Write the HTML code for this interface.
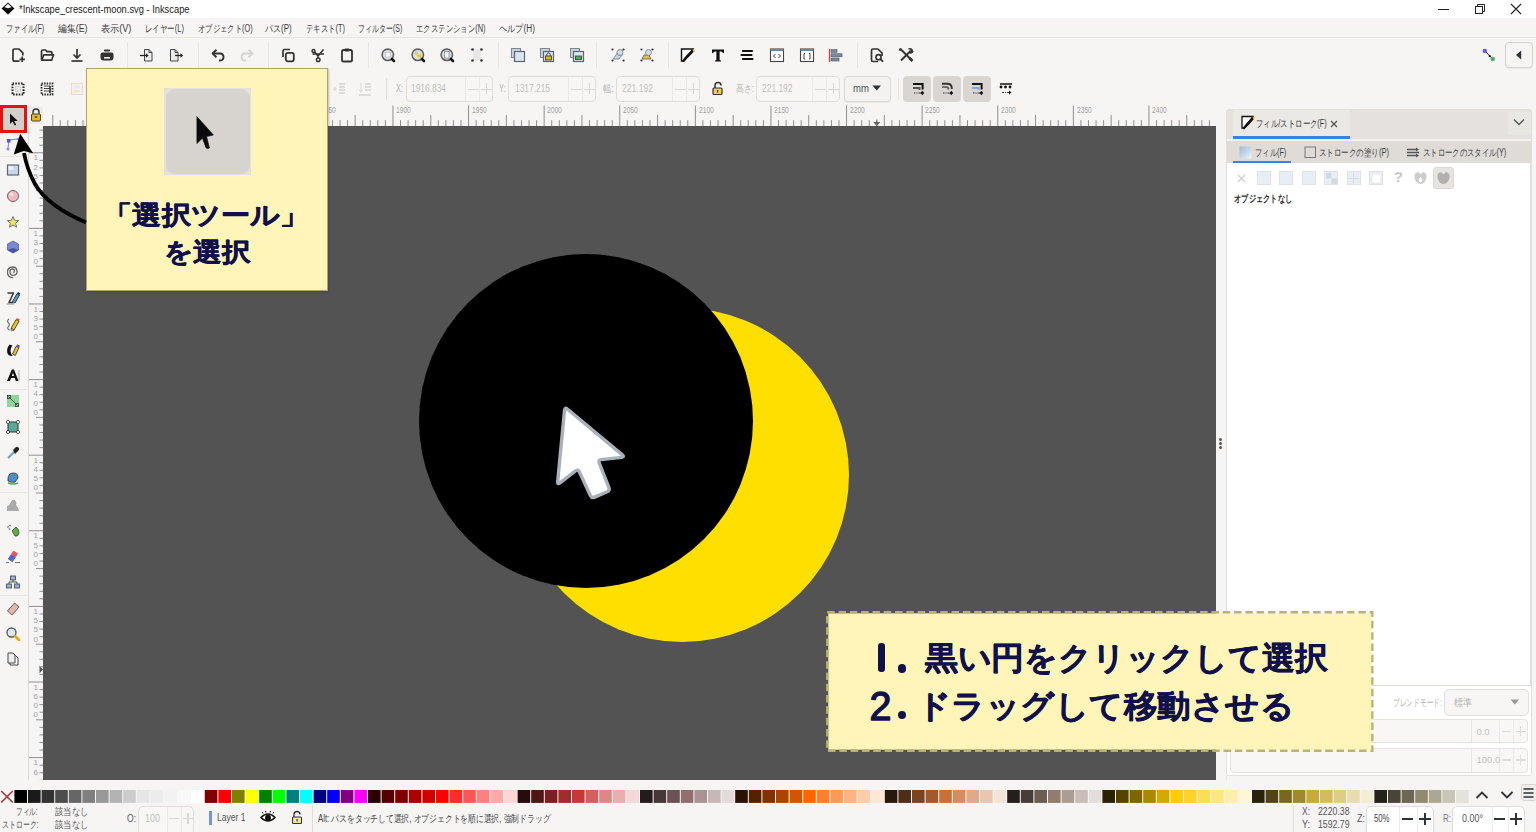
<!DOCTYPE html><html><head><meta charset="utf-8"><style>*{margin:0;padding:0;box-sizing:border-box}html,body{width:1536px;height:832px;overflow:hidden;background:#f6f5f4;font-family:"Liberation Sans",sans-serif}.a{position:absolute}.t{position:absolute;white-space:nowrap}svg.a{overflow:visible}</style></head><body>
<div class="a" style="left:0px;top:0px;width:1536px;height:18px;background:#fff"></div>
<svg class="a" style="left:1px;top:2px;" width="14" height="13" viewBox="0 0 14 13"><path d="M7 0.5 L13.5 6.5 L7 12.5 L0.5 6.5Z" fill="#111"/><path d="M7 1.8 L10.5 5.2 L7 6.2 L3.5 5.2Z" fill="#fff"/><path d="M4 9 L10 9 L7 12Z" fill="#000"/></svg>
<div class="t" style="left:19.1px;top:3.60px;height:11px;line-height:11px;font-size:11px;color:#1a1a1a;font-weight:normal;transform:scaleX(0.8476);transform-origin:0 50%;">*Inkscape_crescent-moon.svg - Inkscape</div>
<div class="a" style="left:1438px;top:8.5px;width:11px;height:1px;background:#222"></div>
<svg class="a" style="left:1473px;top:2px;" width="14" height="14" viewBox="0 0 14 14"><rect x="2.5" y="4.5" width="7" height="7" fill="none" stroke="#222" stroke-width="1"/><path d="M4.5 4.5 V2.5 H11.5 V9.5 H9.5" fill="none" stroke="#222" stroke-width="1"/></svg>
<svg class="a" style="left:1508px;top:1px;" width="16" height="16" viewBox="0 0 16 16"><path d="M3 3 L13 13 M13 3 L3 13" stroke="#222" stroke-width="1.1"/></svg>
<div class="a" style="left:0px;top:37px;width:1536px;height:1px;background:#e8e6e3"></div>
<div class="t" style="left:6.4px;top:23.60px;height:10px;line-height:10px;font-size:10px;color:#3c3c3c;font-weight:normal;transform:scaleX(0.7256);transform-origin:0 50%;">ファイル(F)</div>
<div class="t" style="left:58px;top:23.60px;height:10px;line-height:10px;font-size:10px;color:#3c3c3c;font-weight:normal;transform:scaleX(0.8847);transform-origin:0 50%;">編集(E)</div>
<div class="t" style="left:101.2px;top:23.60px;height:10px;line-height:10px;font-size:10px;color:#3c3c3c;font-weight:normal;transform:scaleX(0.9117);transform-origin:0 50%;">表示(V)</div>
<div class="t" style="left:145px;top:23.60px;height:10px;line-height:10px;font-size:10px;color:#3c3c3c;font-weight:normal;transform:scaleX(0.7466);transform-origin:0 50%;">レイヤー(L)</div>
<div class="t" style="left:197.8px;top:23.60px;height:10px;line-height:10px;font-size:10px;color:#3c3c3c;font-weight:normal;transform:scaleX(0.7347);transform-origin:0 50%;">オブジェクト(O)</div>
<div class="t" style="left:265.2px;top:23.60px;height:10px;line-height:10px;font-size:10px;color:#3c3c3c;font-weight:normal;transform:scaleX(0.8007);transform-origin:0 50%;">パス(P)</div>
<div class="t" style="left:305.5px;top:23.60px;height:10px;line-height:10px;font-size:10px;color:#3c3c3c;font-weight:normal;transform:scaleX(0.7370);transform-origin:0 50%;">テキスト(T)</div>
<div class="t" style="left:357.9px;top:23.60px;height:10px;line-height:10px;font-size:10px;color:#3c3c3c;font-weight:normal;transform:scaleX(0.6994);transform-origin:0 50%;">フィルター(S)</div>
<div class="t" style="left:415.5px;top:23.60px;height:10px;line-height:10px;font-size:10px;color:#3c3c3c;font-weight:normal;transform:scaleX(0.7402);transform-origin:0 50%;">エクステンション(N)</div>
<div class="t" style="left:498.8px;top:23.60px;height:10px;line-height:10px;font-size:10px;color:#3c3c3c;font-weight:normal;transform:scaleX(0.8179);transform-origin:0 50%;">ヘルプ(H)</div>
<div class="a" style="left:127px;top:42px;width:1px;height:26px;background:#e9e7e4"></div>
<div class="a" style="left:197.5px;top:42px;width:1px;height:26px;background:#e9e7e4"></div>
<div class="a" style="left:267.6px;top:42px;width:1px;height:26px;background:#e9e7e4"></div>
<div class="a" style="left:367.6px;top:42px;width:1px;height:26px;background:#e9e7e4"></div>
<div class="a" style="left:497.5px;top:42px;width:1px;height:26px;background:#e9e7e4"></div>
<div class="a" style="left:596px;top:42px;width:1px;height:26px;background:#e9e7e4"></div>
<div class="a" style="left:667.5px;top:42px;width:1px;height:26px;background:#e9e7e4"></div>
<div class="a" style="left:857px;top:42px;width:1px;height:26px;background:#e9e7e4"></div>
<svg class="a" style="left:9.8px;top:47.0px;" width="16" height="16" viewBox="0 0 16 16"><path d="M9.5 14.2 H4.6 Q3 14.2 3 12.6 V3.6 Q3 2 4.6 2 H9 L12.8 5.8 V8.5" fill="none" stroke="#333" stroke-width="1.7" stroke-linejoin="round"/><path d="M12.2 9.6 V15 M9.5 12.3 H14.9" stroke="#333" stroke-width="1.7"/></svg>
<svg class="a" style="left:39.2px;top:47.0px;" width="16" height="16" viewBox="0 0 16 16"><path d="M2.5 12.5 V4.4 Q2.5 3 4 3 H6.5 L8 4.6 H11.5 Q13 4.6 13 6 V7" fill="none" stroke="#333" stroke-width="1.7" stroke-linejoin="round"/><path d="M2.8 13.2 L4.8 7.8 H14.6 L12.6 13.2 Z" fill="none" stroke="#333" stroke-width="1.7" stroke-linejoin="round"/></svg>
<svg class="a" style="left:68.9px;top:47.0px;" width="16" height="16" viewBox="0 0 16 16"><path d="M8 2 V11 M4.5 7.5 L8 11 L11.5 7.5" fill="none" stroke="#333" stroke-width="1.7"/><path d="M2.5 14 H13.5" stroke="#333" stroke-width="1.7"/></svg>
<svg class="a" style="left:98.5px;top:47.0px;" width="16" height="16" viewBox="0 0 16 16"><rect x="5" y="2.5" width="6" height="2" rx="0.8" fill="#333"/><path d="M1.5 7.5 Q1.5 5.5 3.5 5.5 H12.5 Q14.5 5.5 14.5 7.5 V10.5 Q14.5 13.5 11.5 13.5 H4.5 Q1.5 13.5 1.5 10.5Z" fill="#333"/><rect x="5" y="10" width="6" height="1.6" fill="#f6f5f4"/></svg>
<svg class="a" style="left:139.2px;top:47.0px;" width="16" height="16" viewBox="0 0 16 16"><path d="M5.5 2.5 H10 L13 5.5 V14 H5.5 Z" fill="#ececec" stroke="#444" stroke-width="1"/><path d="M10 2.5 V5.5 H13" fill="none" stroke="#444" stroke-width="1"/><path d="M1 8.5 H8.5" stroke="#222" stroke-width="1.3"/><path d="M7 6.3 L9.6 8.5 L7 10.7Z" fill="#222"/></svg>
<svg class="a" style="left:168.2px;top:47.0px;" width="16" height="16" viewBox="0 0 16 16"><path d="M2.5 2.5 H7 L10 5.5 V14 H2.5 Z" fill="#ececec" stroke="#444" stroke-width="1"/><path d="M7 2.5 V5.5 H10" fill="none" stroke="#444" stroke-width="1"/><path d="M7 8.5 H13.5" stroke="#222" stroke-width="1.3"/><path d="M12.5 6.3 L15.2 8.5 L12.5 10.7Z" fill="#222"/></svg>
<svg class="a" style="left:209.6px;top:47.0px;" width="16" height="16" viewBox="0 0 16 16"><path d="M3 6.5 H10 Q13.5 6.5 13.5 10 Q13.5 13.5 10 13.5 H9" fill="none" stroke="#333" stroke-width="1.9"/><path d="M6.5 2.8 L2.6 6.5 L6.5 10.2" fill="none" stroke="#333" stroke-width="1.9" stroke-linejoin="round"/></svg>
<svg class="a" style="left:238.6px;top:47.0px;" width="16" height="16" viewBox="0 0 16 16"><path d="M13 6.5 H6 Q2.5 6.5 2.5 10 Q2.5 13.5 6 13.5 H7" fill="none" stroke="#d5d3d0" stroke-width="1.9"/><path d="M9.5 2.8 L13.4 6.5 L9.5 10.2" fill="none" stroke="#d5d3d0" stroke-width="1.9" stroke-linejoin="round"/></svg>
<svg class="a" style="left:280.0px;top:47.0px;" width="16" height="16" viewBox="0 0 16 16"><path d="M3 10 V4 Q3 2.5 4.5 2.5 H10" fill="none" stroke="#333" stroke-width="1.7"/><rect x="5.8" y="5.8" width="8" height="8.5" rx="2" fill="none" stroke="#333" stroke-width="1.8"/></svg>
<svg class="a" style="left:309.6px;top:47.0px;" width="16" height="16" viewBox="0 0 16 16"><circle cx="8.2" cy="12.8" r="1.8" fill="none" stroke="#333" stroke-width="1.5"/><circle cx="3.5" cy="4" r="1.5" fill="none" stroke="#333" stroke-width="1.4"/><path d="M4.8 5 L8 9 L13.5 2.5 M8 9 V11 M2.5 7 H14" fill="none" stroke="#333" stroke-width="1.5"/></svg>
<svg class="a" style="left:339.3px;top:47.0px;" width="16" height="16" viewBox="0 0 16 16"><rect x="3" y="3" width="10" height="11.5" rx="1.6" fill="none" stroke="#333" stroke-width="1.8"/><rect x="5.5" y="1.5" width="5" height="3" rx="0.8" fill="#333"/></svg>
<svg class="a" style="left:379.8px;top:47.0px;" width="16" height="16" viewBox="0 0 16 16"><circle cx="7.8" cy="7.8" r="5.7" fill="#dde3ea" stroke="#5e5e5e" stroke-width="1.6"/><rect x="5.3" y="5.5" width="5" height="4.5" fill="#fff" stroke="#bbb" stroke-width="0.8"/><path d="M12 12 L14 14" stroke="#111" stroke-width="2.6" stroke-linecap="round"/></svg>
<svg class="a" style="left:409.5px;top:47.0px;" width="16" height="16" viewBox="0 0 16 16"><circle cx="7.8" cy="7.8" r="5.7" fill="#dde3ea" stroke="#5e5e5e" stroke-width="1.6"/><rect x="4.5" y="4.5" width="3.5" height="3.5" fill="#d8d070" /><rect x="7.3" y="7.3" width="4" height="3.5" fill="#e8cc30"/><path d="M12 12 L14 14" stroke="#111" stroke-width="2.6" stroke-linecap="round"/></svg>
<svg class="a" style="left:438.5px;top:47.0px;" width="16" height="16" viewBox="0 0 16 16"><circle cx="7.8" cy="7.8" r="5.7" fill="#dde3ea" stroke="#5e5e5e" stroke-width="1.6"/><rect x="5.6" y="4.6" width="4.5" height="6.5" fill="#fff" stroke="#888" stroke-width="0.9"/><path d="M12 12 L14 14" stroke="#111" stroke-width="2.6" stroke-linecap="round"/></svg>
<svg class="a" style="left:468.9px;top:47.0px;" width="16" height="16" viewBox="0 0 16 16"><rect x="4" y="2.5" width="8" height="11" fill="#e6e6e6"/><circle cx="3.5" cy="2.5" r="1.3" fill="#333"/><circle cx="12.5" cy="2.5" r="1.3" fill="#333"/><circle cx="3.5" cy="13.5" r="1.3" fill="#333"/><circle cx="12.5" cy="13.5" r="1.3" fill="#333"/></svg>
<svg class="a" style="left:509.5px;top:47.0px;" width="16" height="16" viewBox="0 0 16 16"><rect x="1.5" y="1.5" width="9" height="9" fill="#c9d3de" stroke="#7a8590" stroke-width="1"/><rect x="4.5" y="4.5" width="10" height="10" fill="#d9e5f2" stroke="#5a6570" stroke-width="1.2"/></svg>
<svg class="a" style="left:539.2px;top:47.0px;" width="16" height="16" viewBox="0 0 16 16"><rect x="1.5" y="1.5" width="9" height="9" fill="#c9d3de" stroke="#7a8590" stroke-width="1"/><rect x="4.5" y="4.5" width="10" height="10" fill="#d9e5f2" stroke="#5a6570" stroke-width="1.2"/><rect x="6.5" y="9" width="6" height="4" fill="#e6b800" stroke="#333" stroke-width="0.8"/><path d="M7.8 9 V7.6 A1.7 1.7 0 0 1 11.2 7.6 V9" fill="none" stroke="#333" stroke-width="0.9"/></svg>
<svg class="a" style="left:568.5px;top:47.0px;" width="16" height="16" viewBox="0 0 16 16"><rect x="1.5" y="1.5" width="9" height="9" fill="#c9d3de" stroke="#7a8590" stroke-width="1"/><rect x="4.5" y="4.5" width="10" height="10" fill="#d9e5f2" stroke="#5a6570" stroke-width="1.2"/><rect x="6.5" y="9" width="6" height="3.5" fill="#4caf50" stroke="#333" stroke-width="0.8"/></svg>
<svg class="a" style="left:609.5px;top:47.0px;" width="16" height="16" viewBox="0 0 16 16"><path d="M3 12 L6 8 Q7 5 10 4 L13 7 L9 12Z" fill="#c5d3e0" stroke="#778" stroke-width="0.8"/><circle cx="10" cy="5.5" r="3" fill="#d0dce8" stroke="#778" stroke-width="0.8"/><circle cx="2.5" cy="2.5" r="1.1" fill="#333"/><circle cx="13.5" cy="2.5" r="1.1" fill="#333"/><circle cx="2.5" cy="13.5" r="1.1" fill="#333"/><circle cx="13.5" cy="13.5" r="1.1" fill="#333"/></svg>
<svg class="a" style="left:639.2px;top:47.0px;" width="16" height="16" viewBox="0 0 16 16"><path d="M3 12 L5 8 H10 L12 12Z" fill="#e6c530" stroke="#555" stroke-width="0.8"/><circle cx="9.5" cy="5.5" r="3" fill="#d0dce8" stroke="#778" stroke-width="0.8"/><circle cx="2.5" cy="2.5" r="1.1" fill="#333"/><circle cx="13.5" cy="2.5" r="1.1" fill="#333"/><circle cx="2.5" cy="13.5" r="1.1" fill="#333"/><circle cx="13.5" cy="13.5" r="1.1" fill="#333"/></svg>
<svg class="a" style="left:679.8px;top:47.0px;" width="16" height="16" viewBox="0 0 16 16"><path d="M1.5 2 H13 L4 14 H1.5Z" fill="#fff" stroke="#111" stroke-width="1.4"/><path d="M2 14 Q5 9 12 3 L14 4.5 Q8 11 3.5 15Z" fill="#111"/><path d="M12.5 2 L15 3.5 L13.5 5.5Z" fill="#f0b400"/></svg>
<svg class="a" style="left:709.5px;top:47.0px;" width="16" height="16" viewBox="0 0 16 16"><path d="M2 2.5 H14 V6 H12.8 Q12.5 4.5 11 4.5 H9.6 V12.5 Q9.6 13.4 11 13.5 V14.5 H5 V13.5 Q6.4 13.4 6.4 12.5 V4.5 H5 Q3.5 4.5 3.2 6 H2Z" fill="#111"/></svg>
<svg class="a" style="left:739.2px;top:47.0px;" width="16" height="16" viewBox="0 0 16 16"><path d="M4 4 H13 M2.5 8 H12.5 M4 12 H13.5" stroke="#111" stroke-width="2.2" stroke-linecap="round"/></svg>
<svg class="a" style="left:768.5px;top:47.0px;" width="16" height="16" viewBox="0 0 16 16"><rect x="1.5" y="2" width="13" height="12.5" fill="#fff" stroke="#444" stroke-width="1.1"/><rect x="1.5" y="2" width="13" height="2" fill="#6a86a6"/><path d="M6.5 7 L4.5 9 L6.5 11 M9.5 7 L11.5 9 L9.5 11" fill="none" stroke="#444" stroke-width="1"/></svg>
<svg class="a" style="left:798.5px;top:47.0px;" width="16" height="16" viewBox="0 0 16 16"><rect x="1.5" y="2" width="13" height="12.5" fill="#fff" stroke="#444" stroke-width="1.1"/><rect x="1.5" y="2" width="13" height="2" fill="#6a86a6"/><path d="M6 6.5 H5 V12 H6 M10 6.5 H11 V12 H10" fill="none" stroke="#444" stroke-width="1"/></svg>
<svg class="a" style="left:827.8px;top:47.0px;" width="16" height="16" viewBox="0 0 16 16"><path d="M1.5 2 V15" stroke="#e33" stroke-width="1.2"/><rect x="3" y="2.5" width="6" height="3" fill="#6f8db0" stroke="#555" stroke-width="0.6"/><rect x="3" y="6.8" width="11" height="3" fill="#6f8db0" stroke="#555" stroke-width="0.6"/><rect x="3" y="11" width="8" height="3" fill="#6f8db0" stroke="#555" stroke-width="0.6"/></svg>
<svg class="a" style="left:868.5px;top:47.0px;" width="16" height="16" viewBox="0 0 16 16"><path d="M9 14.5 H4 Q2.5 14.5 2.5 13 V3.5 Q2.5 2 4 2 H9 L13 6 V9" fill="none" stroke="#333" stroke-width="1.7" stroke-linejoin="round"/><circle cx="9.5" cy="10.2" r="2.6" fill="none" stroke="#333" stroke-width="1.6"/><path d="M11.3 12 L14 14.7" stroke="#333" stroke-width="1.8"/></svg>
<svg class="a" style="left:898.0px;top:47.0px;" width="16" height="16" viewBox="0 0 16 16"><path d="M3 13.5 L12.5 4" stroke="#333" stroke-width="2"/><path d="M3.5 3 L13 12.5" stroke="#333" stroke-width="2"/><path d="M10.5 2 Q13.5 1 14.5 4 L12.5 4 L12.5 6 Q14.5 6 14.5 4" fill="none" stroke="#333" stroke-width="1.6"/><circle cx="2.5" cy="2.5" r="1.5" fill="#333"/><path d="M11.5 11 L14.5 14" stroke="#333" stroke-width="2.6"/></svg>
<svg class="a" style="left:1480px;top:46px;" width="16" height="16" viewBox="0 0 16 16"><path d="M4.8 4.8 L12.7 13" stroke="#333" stroke-width="1"/><circle cx="4.8" cy="4.9" r="2.2" fill="#5b5bf5"/><circle cx="12.7" cy="13" r="2.3" fill="#4caf6a"/><circle cx="9.7" cy="10" r="1.1" fill="#000"/></svg>
<div class="a" style="left:1504.6px;top:41.7px;width:28px;height:26.7px;background:#f6f5f4;border:1px solid #d6d3cf;border-radius:4px;box-shadow:0 1px 1px rgba(0,0,0,0.06)"></div>
<svg class="a" style="left:1514px;top:49px;" width="10" height="12" viewBox="0 0 10 12"><path d="M7.2 1.5 V10.5 L2 6Z" fill="#2e3436"/></svg>
<svg class="a" style="left:9.5px;top:80.7px;" width="16" height="16" viewBox="0 0 16 16"><rect x="2.5" y="2.5" width="11" height="11" fill="none" stroke="#222" stroke-width="2" stroke-dasharray="1.6 1.2"/><rect x="5.5" y="5.5" width="5" height="5" fill="#e9e9e9" stroke="#bbb" stroke-width="0.6"/></svg>
<svg class="a" style="left:39px;top:80.5px;" width="16" height="16" viewBox="0 0 16 16"><rect x="2.5" y="2.5" width="11" height="11" fill="none" stroke="#222" stroke-width="1.8" stroke-dasharray="1.4 1.2"/><path d="M5 5 H11 M5 7.5 H11 M5 10 H11" stroke="#444" stroke-width="1.2"/><path d="M11 5 V12" stroke="#222" stroke-width="1.5"/></svg>
<svg class="a" style="left:69px;top:80.5px;" width="16" height="16" viewBox="0 0 16 16"><rect x="2.5" y="2.5" width="11" height="11" fill="#f7f1ea" stroke="#f0d8d8" stroke-width="1"/><rect x="4.5" y="4.5" width="7" height="3" fill="#e4ecf4"/><path d="M5 10 L11 10" stroke="#efeac0" stroke-width="2"/></svg>
<svg class="a" style="left:331px;top:80.5px;" width="16" height="16" viewBox="0 0 16 16"><path d="M2 8 H6 M4 6 V10" stroke="#d8d6d3" stroke-width="1"/><path d="M8 3 H14 M8 6 H14 M8 9 H14 M8 12 H14" stroke="#d6d4d1" stroke-width="1.6"/></svg>
<svg class="a" style="left:357px;top:80.5px;" width="16" height="16" viewBox="0 0 16 16"><path d="M4 2 V11 M2 9 L4 11 L6 9" fill="none" stroke="#d8d6d3" stroke-width="1"/><path d="M8 3 H14 M8 6 H14 M8 9 H14 M2 14 H14" stroke="#d6d4d1" stroke-width="1.6"/></svg>
<div class="a" style="left:386px;top:78px;width:1px;height:22px;background:#e4e1dd"></div>
<div class="t" style="left:395.5px;top:83.80px;height:10px;line-height:10px;font-size:10px;color:#b8b6b3;font-weight:normal;transform:scaleX(0.7405);transform-origin:0 50%;">X:</div>
<div class="a" style="left:405.5px;top:75.5px;width:87.0px;height:26.5px;background:#f7f6f5;border:1px solid #e0ddd9;border-radius:4px"></div>
<div class="a" style="left:464.5px;top:76.5px;width:1px;height:24.5px;background:#ebe9e6"></div>
<div class="a" style="left:479.0px;top:76.5px;width:1px;height:24.5px;background:#ebe9e6"></div>
<div class="a" style="left:467.5px;top:88.5px;width:11px;height:1.2px;background:#dad8d5"></div>
<div class="a" style="left:481.0px;top:88.5px;width:11px;height:1.2px;background:#dad8d5"></div>
<div class="a" style="left:486.0px;top:83px;width:1.2px;height:11px;background:#dad8d5"></div>
<div class="t" style="left:411.3px;top:83.80px;height:10px;line-height:10px;font-size:10px;color:#c2c0bd;font-weight:normal;transform:scaleX(0.8390);transform-origin:0 50%;">1916.834</div>
<div class="t" style="left:499px;top:83.80px;height:10px;line-height:10px;font-size:10px;color:#b8b6b3;font-weight:normal;transform:scaleX(0.7298);transform-origin:0 50%;">Y:</div>
<div class="a" style="left:508px;top:75.5px;width:87.5px;height:26.5px;background:#f7f6f5;border:1px solid #e0ddd9;border-radius:4px"></div>
<div class="a" style="left:567.5px;top:76.5px;width:1px;height:24.5px;background:#ebe9e6"></div>
<div class="a" style="left:582.0px;top:76.5px;width:1px;height:24.5px;background:#ebe9e6"></div>
<div class="a" style="left:570.5px;top:88.5px;width:11px;height:1.2px;background:#dad8d5"></div>
<div class="a" style="left:584.0px;top:88.5px;width:11px;height:1.2px;background:#dad8d5"></div>
<div class="a" style="left:589.0px;top:83px;width:1.2px;height:11px;background:#dad8d5"></div>
<div class="t" style="left:514.5px;top:83.80px;height:10px;line-height:10px;font-size:10px;color:#c2c0bd;font-weight:normal;transform:scaleX(0.8390);transform-origin:0 50%;">1317.215</div>
<div class="t" style="left:602.5px;top:83.80px;height:10px;line-height:10px;font-size:10px;color:#b8b6b3;font-weight:normal;transform:scaleX(0.8215);transform-origin:0 50%;">幅:</div>
<div class="a" style="left:616px;top:75.5px;width:83.5px;height:26.5px;background:#f7f6f5;border:1px solid #e0ddd9;border-radius:4px"></div>
<div class="a" style="left:671.5px;top:76.5px;width:1px;height:24.5px;background:#ebe9e6"></div>
<div class="a" style="left:686.0px;top:76.5px;width:1px;height:24.5px;background:#ebe9e6"></div>
<div class="a" style="left:674.5px;top:88.5px;width:11px;height:1.2px;background:#dad8d5"></div>
<div class="a" style="left:688.0px;top:88.5px;width:11px;height:1.2px;background:#dad8d5"></div>
<div class="a" style="left:693.0px;top:83px;width:1.2px;height:11px;background:#dad8d5"></div>
<div class="t" style="left:622px;top:83.80px;height:10px;line-height:10px;font-size:10px;color:#c2c0bd;font-weight:normal;transform:scaleX(0.8574);transform-origin:0 50%;">221.192</div>
<svg class="a" style="left:710px;top:80px;" width="16" height="16" viewBox="0 0 16 16"><path d="M5 8 V5.5 A3 3 0 0 1 11 5.5" fill="none" stroke="#333" stroke-width="1.5"/><rect x="3" y="8" width="9" height="6.5" rx="1" fill="#f2d13a" stroke="#333" stroke-width="1.2"/><rect x="7" y="10" width="1.2" height="2.5" fill="#333"/></svg>
<div class="t" style="left:735.8px;top:83.80px;height:10px;line-height:10px;font-size:10px;color:#b8b6b3;font-weight:normal;transform:scaleX(0.7901);transform-origin:0 50%;">高さ:</div>
<div class="a" style="left:756px;top:75.5px;width:83.5px;height:26.5px;background:#f7f6f5;border:1px solid #e0ddd9;border-radius:4px"></div>
<div class="a" style="left:811.5px;top:76.5px;width:1px;height:24.5px;background:#ebe9e6"></div>
<div class="a" style="left:826.0px;top:76.5px;width:1px;height:24.5px;background:#ebe9e6"></div>
<div class="a" style="left:814.5px;top:88.5px;width:11px;height:1.2px;background:#dad8d5"></div>
<div class="a" style="left:828.0px;top:88.5px;width:11px;height:1.2px;background:#dad8d5"></div>
<div class="a" style="left:833.0px;top:83px;width:1.2px;height:11px;background:#dad8d5"></div>
<div class="t" style="left:762px;top:83.80px;height:10px;line-height:10px;font-size:10px;color:#c2c0bd;font-weight:normal;transform:scaleX(0.8436);transform-origin:0 50%;">221.192</div>
<div class="a" style="left:844px;top:75.5px;width:46.5px;height:26.5px;background:#f3f2f1;border:1px solid #dcd9d5;border-radius:4px;box-shadow:0 1px 1px rgba(0,0,0,0.05)"></div>
<div class="t" style="left:853px;top:83.80px;height:10px;line-height:10px;font-size:10px;color:#555;font-weight:normal;transform:scaleX(0.9597);transform-origin:0 50%;">mm</div>
<svg class="a" style="left:871px;top:84px;" width="12" height="8" viewBox="0 0 12 8"><path d="M1.5 1.5 H10 L5.75 6.5Z" fill="#2e3436"/></svg>
<div class="a" style="left:897.5px;top:78px;width:1px;height:22px;background:#e4e1dd"></div>
<div class="a" style="left:903.4px;top:75.6px;width:28.0px;height:26px;background:#d9d5d1;border-radius:4px"></div>
<div class="a" style="left:933.2px;top:75.6px;width:27.59999999999991px;height:26px;background:#d9d5d1;border-radius:4px"></div>
<div class="a" style="left:963.4px;top:75.6px;width:27.200000000000045px;height:26px;background:#d9d5d1;border-radius:4px"></div>
<svg class="a" style="left:909.5px;top:80px;" width="16" height="16" viewBox="0 0 16 16"><path d="M3 4 H12.6 V9.5" fill="none" stroke="#111" stroke-width="2"/><path d="M3 8 H9.5 V10" fill="none" stroke="#555" stroke-width="1.9"/><path d="M4 13 H5.5 M6.5 13 H7.5 M8.5 13 H11" stroke="#333" stroke-width="1.1"/><path d="M10.6 13 L12.4 10.8 L14.2 13 L12.4 15.2Z" fill="#111"/></svg>
<svg class="a" style="left:939px;top:80px;" width="16" height="16" viewBox="0 0 16 16"><path d="M3 3.8 H8.5 Q12.8 3.8 12.8 8.5 V9" fill="none" stroke="#333" stroke-width="1.9"/><path d="M3 7 H7.2 Q9.5 7 9.5 9.5" fill="none" stroke="#555" stroke-width="1.7"/><path d="M4 13 H5.5 M6.5 13 H7.5 M8.5 13 H11" stroke="#333" stroke-width="1.1"/><path d="M10.6 13 L12.4 10.8 L14.2 13 L12.4 15.2Z" fill="#111"/></svg>
<svg class="a" style="left:969px;top:80px;" width="16" height="16" viewBox="0 0 16 16"><path d="M3 4 H12.6 V9.5" fill="none" stroke="#111" stroke-width="2"/><path d="M3 8 H9.5 V10" fill="none" stroke="#7fa6d6" stroke-width="1.9"/><path d="M4 13 H5.5 M6.5 13 H7.5 M8.5 13 H11" stroke="#333" stroke-width="1.1"/><path d="M10.6 13 L12.4 10.8 L14.2 13 L12.4 15.2Z" fill="#111"/></svg>
<svg class="a" style="left:998px;top:80px;" width="16" height="16" viewBox="0 0 16 16"><path d="M2 4 H14" stroke="#111" stroke-width="1.5"/><circle cx="3" cy="7" r="1.4" fill="#111"/><circle cx="7.5" cy="7" r="1.4" fill="#111"/><circle cx="12" cy="7" r="1.4" fill="#111"/><path d="M4 12.5 H6 M7 12.5 H8 M9 12.5 H12" stroke="#222" stroke-width="0.9"/><path d="M11 10.5 L13.5 12.5 L11 14.5Z" fill="#111"/></svg>
<div class="a" style="left:43px;top:126px;width:1173px;height:654px;background:#535353"></div>
<div class="a" style="left:515px;top:308px;width:334px;height:334px;border-radius:50%;background:#ffdf00"></div>
<div class="a" style="left:418.5px;top:254px;width:334px;height:334px;border-radius:50%;background:#000"></div>
<svg class="a" style="left:540px;top:395px;" width="100" height="115" viewBox="0 0 100 115"><path d="M27.30 14.02 L82.31 59.91 Q84.76 61.96 81.58 62.32 L61.18 64.64 Q58.00 65.00 59.18 67.98 L68.90 92.55 Q70.08 95.52 67.14 96.79 L54.71 102.14 Q51.77 103.40 50.41 100.51 L39.36 76.90 Q38.00 74.00 35.46 75.94 L19.93 87.83 Q17.38 89.77 17.69 86.59 L24.54 15.16 Q24.84 11.97 27.30 14.02 Z" fill="#fff" stroke="#a9b1ba" stroke-width="3.4" stroke-linejoin="round"/></svg>
<svg class="a" style="left:43px;top:105px;" width="1173" height="21" viewBox="0 0 1173 21"><rect x="9.25" y="10" width="1" height="11" fill="#8f8f8f"/><rect x="16.81" y="15.2" width="1" height="5.8" fill="#8f8f8f"/><rect x="24.37" y="15.2" width="1" height="5.8" fill="#8f8f8f"/><rect x="31.93" y="15.2" width="1" height="5.8" fill="#8f8f8f"/><rect x="39.49" y="15.2" width="1" height="5.8" fill="#8f8f8f"/><rect x="47.05" y="0.5" width="1" height="20.5" fill="#8f8f8f"/><rect x="54.61" y="15.2" width="1" height="5.8" fill="#8f8f8f"/><rect x="62.17" y="15.2" width="1" height="5.8" fill="#8f8f8f"/><rect x="69.73" y="15.2" width="1" height="5.8" fill="#8f8f8f"/><rect x="77.29" y="15.2" width="1" height="5.8" fill="#8f8f8f"/><rect x="84.85" y="10" width="1" height="11" fill="#8f8f8f"/><rect x="92.41" y="15.2" width="1" height="5.8" fill="#8f8f8f"/><rect x="99.97" y="15.2" width="1" height="5.8" fill="#8f8f8f"/><rect x="107.53" y="15.2" width="1" height="5.8" fill="#8f8f8f"/><rect x="115.09" y="15.2" width="1" height="5.8" fill="#8f8f8f"/><rect x="122.65" y="0.5" width="1" height="20.5" fill="#8f8f8f"/><rect x="130.21" y="15.2" width="1" height="5.8" fill="#8f8f8f"/><rect x="137.77" y="15.2" width="1" height="5.8" fill="#8f8f8f"/><rect x="145.33" y="15.2" width="1" height="5.8" fill="#8f8f8f"/><rect x="152.89" y="15.2" width="1" height="5.8" fill="#8f8f8f"/><rect x="160.45" y="10" width="1" height="11" fill="#8f8f8f"/><rect x="168.01" y="15.2" width="1" height="5.8" fill="#8f8f8f"/><rect x="175.57" y="15.2" width="1" height="5.8" fill="#8f8f8f"/><rect x="183.13" y="15.2" width="1" height="5.8" fill="#8f8f8f"/><rect x="190.69" y="15.2" width="1" height="5.8" fill="#8f8f8f"/><rect x="198.25" y="0.5" width="1" height="20.5" fill="#8f8f8f"/><rect x="205.81" y="15.2" width="1" height="5.8" fill="#8f8f8f"/><rect x="213.37" y="15.2" width="1" height="5.8" fill="#8f8f8f"/><rect x="220.93" y="15.2" width="1" height="5.8" fill="#8f8f8f"/><rect x="228.49" y="15.2" width="1" height="5.8" fill="#8f8f8f"/><rect x="236.05" y="10" width="1" height="11" fill="#8f8f8f"/><rect x="243.61" y="15.2" width="1" height="5.8" fill="#8f8f8f"/><rect x="251.17" y="15.2" width="1" height="5.8" fill="#8f8f8f"/><rect x="258.73" y="15.2" width="1" height="5.8" fill="#8f8f8f"/><rect x="266.29" y="15.2" width="1" height="5.8" fill="#8f8f8f"/><rect x="273.85" y="0.5" width="1" height="20.5" fill="#8f8f8f"/><rect x="281.41" y="15.2" width="1" height="5.8" fill="#8f8f8f"/><rect x="288.97" y="15.2" width="1" height="5.8" fill="#8f8f8f"/><rect x="296.53" y="15.2" width="1" height="5.8" fill="#8f8f8f"/><rect x="304.09" y="15.2" width="1" height="5.8" fill="#8f8f8f"/><rect x="311.65" y="10" width="1" height="11" fill="#8f8f8f"/><rect x="319.21" y="15.2" width="1" height="5.8" fill="#8f8f8f"/><rect x="326.77" y="15.2" width="1" height="5.8" fill="#8f8f8f"/><rect x="334.33" y="15.2" width="1" height="5.8" fill="#8f8f8f"/><rect x="341.89" y="15.2" width="1" height="5.8" fill="#8f8f8f"/><rect x="349.45" y="0.5" width="1" height="20.5" fill="#8f8f8f"/><rect x="357.01" y="15.2" width="1" height="5.8" fill="#8f8f8f"/><rect x="364.57" y="15.2" width="1" height="5.8" fill="#8f8f8f"/><rect x="372.13" y="15.2" width="1" height="5.8" fill="#8f8f8f"/><rect x="379.69" y="15.2" width="1" height="5.8" fill="#8f8f8f"/><rect x="387.25" y="10" width="1" height="11" fill="#8f8f8f"/><rect x="394.81" y="15.2" width="1" height="5.8" fill="#8f8f8f"/><rect x="402.37" y="15.2" width="1" height="5.8" fill="#8f8f8f"/><rect x="409.93" y="15.2" width="1" height="5.8" fill="#8f8f8f"/><rect x="417.49" y="15.2" width="1" height="5.8" fill="#8f8f8f"/><rect x="425.05" y="0.5" width="1" height="20.5" fill="#8f8f8f"/><rect x="432.61" y="15.2" width="1" height="5.8" fill="#8f8f8f"/><rect x="440.17" y="15.2" width="1" height="5.8" fill="#8f8f8f"/><rect x="447.73" y="15.2" width="1" height="5.8" fill="#8f8f8f"/><rect x="455.29" y="15.2" width="1" height="5.8" fill="#8f8f8f"/><rect x="462.85" y="10" width="1" height="11" fill="#8f8f8f"/><rect x="470.41" y="15.2" width="1" height="5.8" fill="#8f8f8f"/><rect x="477.97" y="15.2" width="1" height="5.8" fill="#8f8f8f"/><rect x="485.53" y="15.2" width="1" height="5.8" fill="#8f8f8f"/><rect x="493.09" y="15.2" width="1" height="5.8" fill="#8f8f8f"/><rect x="500.65" y="0.5" width="1" height="20.5" fill="#8f8f8f"/><rect x="508.21" y="15.2" width="1" height="5.8" fill="#8f8f8f"/><rect x="515.77" y="15.2" width="1" height="5.8" fill="#8f8f8f"/><rect x="523.33" y="15.2" width="1" height="5.8" fill="#8f8f8f"/><rect x="530.89" y="15.2" width="1" height="5.8" fill="#8f8f8f"/><rect x="538.45" y="10" width="1" height="11" fill="#8f8f8f"/><rect x="546.01" y="15.2" width="1" height="5.8" fill="#8f8f8f"/><rect x="553.57" y="15.2" width="1" height="5.8" fill="#8f8f8f"/><rect x="561.13" y="15.2" width="1" height="5.8" fill="#8f8f8f"/><rect x="568.69" y="15.2" width="1" height="5.8" fill="#8f8f8f"/><rect x="576.25" y="0.5" width="1" height="20.5" fill="#8f8f8f"/><rect x="583.81" y="15.2" width="1" height="5.8" fill="#8f8f8f"/><rect x="591.37" y="15.2" width="1" height="5.8" fill="#8f8f8f"/><rect x="598.93" y="15.2" width="1" height="5.8" fill="#8f8f8f"/><rect x="606.49" y="15.2" width="1" height="5.8" fill="#8f8f8f"/><rect x="614.05" y="10" width="1" height="11" fill="#8f8f8f"/><rect x="621.61" y="15.2" width="1" height="5.8" fill="#8f8f8f"/><rect x="629.17" y="15.2" width="1" height="5.8" fill="#8f8f8f"/><rect x="636.73" y="15.2" width="1" height="5.8" fill="#8f8f8f"/><rect x="644.29" y="15.2" width="1" height="5.8" fill="#8f8f8f"/><rect x="651.85" y="0.5" width="1" height="20.5" fill="#8f8f8f"/><rect x="659.41" y="15.2" width="1" height="5.8" fill="#8f8f8f"/><rect x="666.97" y="15.2" width="1" height="5.8" fill="#8f8f8f"/><rect x="674.53" y="15.2" width="1" height="5.8" fill="#8f8f8f"/><rect x="682.09" y="15.2" width="1" height="5.8" fill="#8f8f8f"/><rect x="689.65" y="10" width="1" height="11" fill="#8f8f8f"/><rect x="697.21" y="15.2" width="1" height="5.8" fill="#8f8f8f"/><rect x="704.77" y="15.2" width="1" height="5.8" fill="#8f8f8f"/><rect x="712.33" y="15.2" width="1" height="5.8" fill="#8f8f8f"/><rect x="719.89" y="15.2" width="1" height="5.8" fill="#8f8f8f"/><rect x="727.45" y="0.5" width="1" height="20.5" fill="#8f8f8f"/><rect x="735.01" y="15.2" width="1" height="5.8" fill="#8f8f8f"/><rect x="742.57" y="15.2" width="1" height="5.8" fill="#8f8f8f"/><rect x="750.13" y="15.2" width="1" height="5.8" fill="#8f8f8f"/><rect x="757.69" y="15.2" width="1" height="5.8" fill="#8f8f8f"/><rect x="765.25" y="10" width="1" height="11" fill="#8f8f8f"/><rect x="772.81" y="15.2" width="1" height="5.8" fill="#8f8f8f"/><rect x="780.37" y="15.2" width="1" height="5.8" fill="#8f8f8f"/><rect x="787.93" y="15.2" width="1" height="5.8" fill="#8f8f8f"/><rect x="795.49" y="15.2" width="1" height="5.8" fill="#8f8f8f"/><rect x="803.05" y="0.5" width="1" height="20.5" fill="#8f8f8f"/><rect x="810.61" y="15.2" width="1" height="5.8" fill="#8f8f8f"/><rect x="818.17" y="15.2" width="1" height="5.8" fill="#8f8f8f"/><rect x="825.73" y="15.2" width="1" height="5.8" fill="#8f8f8f"/><rect x="833.29" y="15.2" width="1" height="5.8" fill="#8f8f8f"/><rect x="840.85" y="10" width="1" height="11" fill="#8f8f8f"/><rect x="848.41" y="15.2" width="1" height="5.8" fill="#8f8f8f"/><rect x="855.97" y="15.2" width="1" height="5.8" fill="#8f8f8f"/><rect x="863.53" y="15.2" width="1" height="5.8" fill="#8f8f8f"/><rect x="871.09" y="15.2" width="1" height="5.8" fill="#8f8f8f"/><rect x="878.65" y="0.5" width="1" height="20.5" fill="#8f8f8f"/><rect x="886.21" y="15.2" width="1" height="5.8" fill="#8f8f8f"/><rect x="893.77" y="15.2" width="1" height="5.8" fill="#8f8f8f"/><rect x="901.33" y="15.2" width="1" height="5.8" fill="#8f8f8f"/><rect x="908.89" y="15.2" width="1" height="5.8" fill="#8f8f8f"/><rect x="916.45" y="10" width="1" height="11" fill="#8f8f8f"/><rect x="924.01" y="15.2" width="1" height="5.8" fill="#8f8f8f"/><rect x="931.57" y="15.2" width="1" height="5.8" fill="#8f8f8f"/><rect x="939.13" y="15.2" width="1" height="5.8" fill="#8f8f8f"/><rect x="946.69" y="15.2" width="1" height="5.8" fill="#8f8f8f"/><rect x="954.25" y="0.5" width="1" height="20.5" fill="#8f8f8f"/><rect x="961.81" y="15.2" width="1" height="5.8" fill="#8f8f8f"/><rect x="969.37" y="15.2" width="1" height="5.8" fill="#8f8f8f"/><rect x="976.93" y="15.2" width="1" height="5.8" fill="#8f8f8f"/><rect x="984.49" y="15.2" width="1" height="5.8" fill="#8f8f8f"/><rect x="992.05" y="10" width="1" height="11" fill="#8f8f8f"/><rect x="999.61" y="15.2" width="1" height="5.8" fill="#8f8f8f"/><rect x="1007.17" y="15.2" width="1" height="5.8" fill="#8f8f8f"/><rect x="1014.73" y="15.2" width="1" height="5.8" fill="#8f8f8f"/><rect x="1022.29" y="15.2" width="1" height="5.8" fill="#8f8f8f"/><rect x="1029.85" y="0.5" width="1" height="20.5" fill="#8f8f8f"/><rect x="1037.41" y="15.2" width="1" height="5.8" fill="#8f8f8f"/><rect x="1044.97" y="15.2" width="1" height="5.8" fill="#8f8f8f"/><rect x="1052.53" y="15.2" width="1" height="5.8" fill="#8f8f8f"/><rect x="1060.09" y="15.2" width="1" height="5.8" fill="#8f8f8f"/><rect x="1067.65" y="10" width="1" height="11" fill="#8f8f8f"/><rect x="1075.21" y="15.2" width="1" height="5.8" fill="#8f8f8f"/><rect x="1082.77" y="15.2" width="1" height="5.8" fill="#8f8f8f"/><rect x="1090.33" y="15.2" width="1" height="5.8" fill="#8f8f8f"/><rect x="1097.89" y="15.2" width="1" height="5.8" fill="#8f8f8f"/><rect x="1105.45" y="0.5" width="1" height="20.5" fill="#8f8f8f"/><rect x="1113.01" y="15.2" width="1" height="5.8" fill="#8f8f8f"/><rect x="1120.57" y="15.2" width="1" height="5.8" fill="#8f8f8f"/><rect x="1128.13" y="15.2" width="1" height="5.8" fill="#8f8f8f"/><rect x="1135.69" y="15.2" width="1" height="5.8" fill="#8f8f8f"/><rect x="1143.25" y="10" width="1" height="11" fill="#8f8f8f"/><rect x="1150.81" y="15.2" width="1" height="5.8" fill="#8f8f8f"/><rect x="1158.37" y="15.2" width="1" height="5.8" fill="#8f8f8f"/><rect x="1165.93" y="15.2" width="1" height="5.8" fill="#8f8f8f"/></svg>
<div class="t" style="left:93.80000000000001px;top:107.30px;height:8.2px;line-height:8.2px;font-size:8.2px;color:#a3a3a3;font-weight:normal;transform:scaleX(0.8123);transform-origin:0 50%;">1700</div>
<div class="t" style="left:169.39999999999998px;top:107.30px;height:8.2px;line-height:8.2px;font-size:8.2px;color:#a3a3a3;font-weight:normal;transform:scaleX(0.8123);transform-origin:0 50%;">1750</div>
<div class="t" style="left:245.0px;top:107.30px;height:8.2px;line-height:8.2px;font-size:8.2px;color:#a3a3a3;font-weight:normal;transform:scaleX(0.8123);transform-origin:0 50%;">1800</div>
<div class="t" style="left:320.6px;top:107.30px;height:8.2px;line-height:8.2px;font-size:8.2px;color:#a3a3a3;font-weight:normal;transform:scaleX(0.8123);transform-origin:0 50%;">1850</div>
<div class="t" style="left:396.2px;top:107.30px;height:8.2px;line-height:8.2px;font-size:8.2px;color:#a3a3a3;font-weight:normal;transform:scaleX(0.8123);transform-origin:0 50%;">1900</div>
<div class="t" style="left:471.79999999999995px;top:107.30px;height:8.2px;line-height:8.2px;font-size:8.2px;color:#a3a3a3;font-weight:normal;transform:scaleX(0.8123);transform-origin:0 50%;">1950</div>
<div class="t" style="left:547.4px;top:107.30px;height:8.2px;line-height:8.2px;font-size:8.2px;color:#a3a3a3;font-weight:normal;transform:scaleX(0.8123);transform-origin:0 50%;">2000</div>
<div class="t" style="left:623.0px;top:107.30px;height:8.2px;line-height:8.2px;font-size:8.2px;color:#a3a3a3;font-weight:normal;transform:scaleX(0.8123);transform-origin:0 50%;">2050</div>
<div class="t" style="left:698.5999999999999px;top:107.30px;height:8.2px;line-height:8.2px;font-size:8.2px;color:#a3a3a3;font-weight:normal;transform:scaleX(0.8123);transform-origin:0 50%;">2100</div>
<div class="t" style="left:774.2px;top:107.30px;height:8.2px;line-height:8.2px;font-size:8.2px;color:#a3a3a3;font-weight:normal;transform:scaleX(0.8123);transform-origin:0 50%;">2150</div>
<div class="t" style="left:849.8px;top:107.30px;height:8.2px;line-height:8.2px;font-size:8.2px;color:#a3a3a3;font-weight:normal;transform:scaleX(0.8123);transform-origin:0 50%;">2200</div>
<div class="t" style="left:925.4000000000001px;top:107.30px;height:8.2px;line-height:8.2px;font-size:8.2px;color:#a3a3a3;font-weight:normal;transform:scaleX(0.8123);transform-origin:0 50%;">2250</div>
<div class="t" style="left:1001.0px;top:107.30px;height:8.2px;line-height:8.2px;font-size:8.2px;color:#a3a3a3;font-weight:normal;transform:scaleX(0.8123);transform-origin:0 50%;">2300</div>
<div class="t" style="left:1076.6px;top:107.30px;height:8.2px;line-height:8.2px;font-size:8.2px;color:#a3a3a3;font-weight:normal;transform:scaleX(0.8123);transform-origin:0 50%;">2350</div>
<div class="t" style="left:1152.2px;top:107.30px;height:8.2px;line-height:8.2px;font-size:8.2px;color:#a3a3a3;font-weight:normal;transform:scaleX(0.8123);transform-origin:0 50%;">2400</div>
<svg class="a" style="left:871px;top:118px;" width="12" height="8" viewBox="0 0 12 8"><path d="M2.3 4 H9.3 L5.8 8Z" fill="#555"/><path d="M5.8 1.5 V8" stroke="#777" stroke-width="1"/></svg>
<svg class="a" style="left:38px;top:664px;" width="6" height="11" viewBox="0 0 6 11"><path d="M1.5 1.5 L5 5.4 L1.5 9.3Z" fill="#555"/></svg>
<svg class="a" style="left:28px;top:126px;" width="15" height="654" viewBox="0 0 15 654"><rect x="11.5" y="3.58" width="3.5" height="1" fill="#8f8f8f"/><rect x="11.5" y="11.14" width="3.5" height="1" fill="#8f8f8f"/><rect x="11.5" y="18.70" width="3.5" height="1" fill="#8f8f8f"/><rect x="1" y="26.26" width="14" height="1" fill="#8f8f8f"/><rect x="11.5" y="33.82" width="3.5" height="1" fill="#8f8f8f"/><rect x="11.5" y="41.38" width="3.5" height="1" fill="#8f8f8f"/><rect x="11.5" y="48.94" width="3.5" height="1" fill="#8f8f8f"/><rect x="11.5" y="56.50" width="3.5" height="1" fill="#8f8f8f"/><rect x="8" y="64.06" width="7" height="1" fill="#8f8f8f"/><rect x="11.5" y="71.62" width="3.5" height="1" fill="#8f8f8f"/><rect x="11.5" y="79.18" width="3.5" height="1" fill="#8f8f8f"/><rect x="11.5" y="86.74" width="3.5" height="1" fill="#8f8f8f"/><rect x="11.5" y="94.30" width="3.5" height="1" fill="#8f8f8f"/><rect x="1" y="101.87" width="14" height="1" fill="#8f8f8f"/><rect x="11.5" y="109.43" width="3.5" height="1" fill="#8f8f8f"/><rect x="11.5" y="116.99" width="3.5" height="1" fill="#8f8f8f"/><rect x="11.5" y="124.55" width="3.5" height="1" fill="#8f8f8f"/><rect x="11.5" y="132.11" width="3.5" height="1" fill="#8f8f8f"/><rect x="8" y="139.67" width="7" height="1" fill="#8f8f8f"/><rect x="11.5" y="147.23" width="3.5" height="1" fill="#8f8f8f"/><rect x="11.5" y="154.79" width="3.5" height="1" fill="#8f8f8f"/><rect x="11.5" y="162.35" width="3.5" height="1" fill="#8f8f8f"/><rect x="11.5" y="169.91" width="3.5" height="1" fill="#8f8f8f"/><rect x="1" y="177.47" width="14" height="1" fill="#8f8f8f"/><rect x="11.5" y="185.03" width="3.5" height="1" fill="#8f8f8f"/><rect x="11.5" y="192.59" width="3.5" height="1" fill="#8f8f8f"/><rect x="11.5" y="200.15" width="3.5" height="1" fill="#8f8f8f"/><rect x="11.5" y="207.71" width="3.5" height="1" fill="#8f8f8f"/><rect x="8" y="215.27" width="7" height="1" fill="#8f8f8f"/><rect x="11.5" y="222.83" width="3.5" height="1" fill="#8f8f8f"/><rect x="11.5" y="230.39" width="3.5" height="1" fill="#8f8f8f"/><rect x="11.5" y="237.95" width="3.5" height="1" fill="#8f8f8f"/><rect x="11.5" y="245.51" width="3.5" height="1" fill="#8f8f8f"/><rect x="1" y="253.07" width="14" height="1" fill="#8f8f8f"/><rect x="11.5" y="260.64" width="3.5" height="1" fill="#8f8f8f"/><rect x="11.5" y="268.20" width="3.5" height="1" fill="#8f8f8f"/><rect x="11.5" y="275.76" width="3.5" height="1" fill="#8f8f8f"/><rect x="11.5" y="283.32" width="3.5" height="1" fill="#8f8f8f"/><rect x="8" y="290.88" width="7" height="1" fill="#8f8f8f"/><rect x="11.5" y="298.44" width="3.5" height="1" fill="#8f8f8f"/><rect x="11.5" y="306.00" width="3.5" height="1" fill="#8f8f8f"/><rect x="11.5" y="313.56" width="3.5" height="1" fill="#8f8f8f"/><rect x="11.5" y="321.12" width="3.5" height="1" fill="#8f8f8f"/><rect x="1" y="328.68" width="14" height="1" fill="#8f8f8f"/><rect x="11.5" y="336.24" width="3.5" height="1" fill="#8f8f8f"/><rect x="11.5" y="343.80" width="3.5" height="1" fill="#8f8f8f"/><rect x="11.5" y="351.36" width="3.5" height="1" fill="#8f8f8f"/><rect x="11.5" y="358.92" width="3.5" height="1" fill="#8f8f8f"/><rect x="8" y="366.48" width="7" height="1" fill="#8f8f8f"/><rect x="11.5" y="374.04" width="3.5" height="1" fill="#8f8f8f"/><rect x="11.5" y="381.60" width="3.5" height="1" fill="#8f8f8f"/><rect x="11.5" y="389.16" width="3.5" height="1" fill="#8f8f8f"/><rect x="11.5" y="396.72" width="3.5" height="1" fill="#8f8f8f"/><rect x="1" y="404.28" width="14" height="1" fill="#8f8f8f"/><rect x="11.5" y="411.85" width="3.5" height="1" fill="#8f8f8f"/><rect x="11.5" y="419.41" width="3.5" height="1" fill="#8f8f8f"/><rect x="11.5" y="426.97" width="3.5" height="1" fill="#8f8f8f"/><rect x="11.5" y="434.53" width="3.5" height="1" fill="#8f8f8f"/><rect x="8" y="442.09" width="7" height="1" fill="#8f8f8f"/><rect x="11.5" y="449.65" width="3.5" height="1" fill="#8f8f8f"/><rect x="11.5" y="457.21" width="3.5" height="1" fill="#8f8f8f"/><rect x="11.5" y="464.77" width="3.5" height="1" fill="#8f8f8f"/><rect x="11.5" y="472.33" width="3.5" height="1" fill="#8f8f8f"/><rect x="1" y="479.89" width="14" height="1" fill="#8f8f8f"/><rect x="11.5" y="487.45" width="3.5" height="1" fill="#8f8f8f"/><rect x="11.5" y="495.01" width="3.5" height="1" fill="#8f8f8f"/><rect x="11.5" y="502.57" width="3.5" height="1" fill="#8f8f8f"/><rect x="11.5" y="510.13" width="3.5" height="1" fill="#8f8f8f"/><rect x="8" y="517.69" width="7" height="1" fill="#8f8f8f"/><rect x="11.5" y="525.25" width="3.5" height="1" fill="#8f8f8f"/><rect x="11.5" y="532.81" width="3.5" height="1" fill="#8f8f8f"/><rect x="11.5" y="540.37" width="3.5" height="1" fill="#8f8f8f"/><rect x="11.5" y="547.93" width="3.5" height="1" fill="#8f8f8f"/><rect x="1" y="555.50" width="14" height="1" fill="#8f8f8f"/><rect x="11.5" y="563.06" width="3.5" height="1" fill="#8f8f8f"/><rect x="11.5" y="570.62" width="3.5" height="1" fill="#8f8f8f"/><rect x="11.5" y="578.18" width="3.5" height="1" fill="#8f8f8f"/><rect x="11.5" y="585.74" width="3.5" height="1" fill="#8f8f8f"/><rect x="8" y="593.30" width="7" height="1" fill="#8f8f8f"/><rect x="11.5" y="600.86" width="3.5" height="1" fill="#8f8f8f"/><rect x="11.5" y="608.42" width="3.5" height="1" fill="#8f8f8f"/><rect x="11.5" y="615.98" width="3.5" height="1" fill="#8f8f8f"/><rect x="11.5" y="623.54" width="3.5" height="1" fill="#8f8f8f"/><rect x="1" y="631.10" width="14" height="1" fill="#8f8f8f"/><rect x="11.5" y="638.66" width="3.5" height="1" fill="#8f8f8f"/><rect x="11.5" y="646.22" width="3.5" height="1" fill="#8f8f8f"/><rect x="11.5" y="653.78" width="3.5" height="1" fill="#8f8f8f"/></svg>
<div class="t" style="left:31.8px;top:154.46px;width:8px;height:8px;line-height:8px;font-size:8px;text-align:center;color:#a3a3a3">1</div>
<div class="t" style="left:31.8px;top:163.66px;width:8px;height:8px;line-height:8px;font-size:8px;text-align:center;color:#a3a3a3">2</div>
<div class="t" style="left:31.8px;top:172.86px;width:8px;height:8px;line-height:8px;font-size:8px;text-align:center;color:#a3a3a3">5</div>
<div class="t" style="left:31.8px;top:182.06px;width:8px;height:8px;line-height:8px;font-size:8px;text-align:center;color:#a3a3a3">0</div>
<div class="t" style="left:31.8px;top:230.06px;width:8px;height:8px;line-height:8px;font-size:8px;text-align:center;color:#a3a3a3">1</div>
<div class="t" style="left:31.8px;top:239.26px;width:8px;height:8px;line-height:8px;font-size:8px;text-align:center;color:#a3a3a3">3</div>
<div class="t" style="left:31.8px;top:248.47px;width:8px;height:8px;line-height:8px;font-size:8px;text-align:center;color:#a3a3a3">0</div>
<div class="t" style="left:31.8px;top:257.67px;width:8px;height:8px;line-height:8px;font-size:8px;text-align:center;color:#a3a3a3">0</div>
<div class="t" style="left:31.8px;top:305.67px;width:8px;height:8px;line-height:8px;font-size:8px;text-align:center;color:#a3a3a3">1</div>
<div class="t" style="left:31.8px;top:314.87px;width:8px;height:8px;line-height:8px;font-size:8px;text-align:center;color:#a3a3a3">3</div>
<div class="t" style="left:31.8px;top:324.07px;width:8px;height:8px;line-height:8px;font-size:8px;text-align:center;color:#a3a3a3">5</div>
<div class="t" style="left:31.8px;top:333.27px;width:8px;height:8px;line-height:8px;font-size:8px;text-align:center;color:#a3a3a3">0</div>
<div class="t" style="left:31.8px;top:381.27px;width:8px;height:8px;line-height:8px;font-size:8px;text-align:center;color:#a3a3a3">1</div>
<div class="t" style="left:31.8px;top:390.47px;width:8px;height:8px;line-height:8px;font-size:8px;text-align:center;color:#a3a3a3">4</div>
<div class="t" style="left:31.8px;top:399.67px;width:8px;height:8px;line-height:8px;font-size:8px;text-align:center;color:#a3a3a3">0</div>
<div class="t" style="left:31.8px;top:408.88px;width:8px;height:8px;line-height:8px;font-size:8px;text-align:center;color:#a3a3a3">0</div>
<div class="t" style="left:31.8px;top:456.88px;width:8px;height:8px;line-height:8px;font-size:8px;text-align:center;color:#a3a3a3">1</div>
<div class="t" style="left:31.8px;top:466.08px;width:8px;height:8px;line-height:8px;font-size:8px;text-align:center;color:#a3a3a3">4</div>
<div class="t" style="left:31.8px;top:475.28px;width:8px;height:8px;line-height:8px;font-size:8px;text-align:center;color:#a3a3a3">5</div>
<div class="t" style="left:31.8px;top:484.48px;width:8px;height:8px;line-height:8px;font-size:8px;text-align:center;color:#a3a3a3">0</div>
<div class="t" style="left:31.8px;top:532.49px;width:8px;height:8px;line-height:8px;font-size:8px;text-align:center;color:#a3a3a3">1</div>
<div class="t" style="left:31.8px;top:541.69px;width:8px;height:8px;line-height:8px;font-size:8px;text-align:center;color:#a3a3a3">5</div>
<div class="t" style="left:31.8px;top:550.88px;width:8px;height:8px;line-height:8px;font-size:8px;text-align:center;color:#a3a3a3">0</div>
<div class="t" style="left:31.8px;top:560.09px;width:8px;height:8px;line-height:8px;font-size:8px;text-align:center;color:#a3a3a3">0</div>
<div class="t" style="left:31.8px;top:608.09px;width:8px;height:8px;line-height:8px;font-size:8px;text-align:center;color:#a3a3a3">1</div>
<div class="t" style="left:31.8px;top:617.29px;width:8px;height:8px;line-height:8px;font-size:8px;text-align:center;color:#a3a3a3">5</div>
<div class="t" style="left:31.8px;top:626.49px;width:8px;height:8px;line-height:8px;font-size:8px;text-align:center;color:#a3a3a3">5</div>
<div class="t" style="left:31.8px;top:635.69px;width:8px;height:8px;line-height:8px;font-size:8px;text-align:center;color:#a3a3a3">0</div>
<div class="t" style="left:31.8px;top:683.70px;width:8px;height:8px;line-height:8px;font-size:8px;text-align:center;color:#a3a3a3">1</div>
<div class="t" style="left:31.8px;top:692.90px;width:8px;height:8px;line-height:8px;font-size:8px;text-align:center;color:#a3a3a3">6</div>
<div class="t" style="left:31.8px;top:702.10px;width:8px;height:8px;line-height:8px;font-size:8px;text-align:center;color:#a3a3a3">0</div>
<div class="t" style="left:31.8px;top:711.30px;width:8px;height:8px;line-height:8px;font-size:8px;text-align:center;color:#a3a3a3">0</div>
<div class="t" style="left:31.8px;top:759.30px;width:8px;height:8px;line-height:8px;font-size:8px;text-align:center;color:#a3a3a3">1</div>
<div class="t" style="left:31.8px;top:768.50px;width:8px;height:8px;line-height:8px;font-size:8px;text-align:center;color:#a3a3a3">6</div>
<div class="a" style="left:28px;top:126px;width:1px;height:654px;background:#dedbd7"></div>
<div class="a" style="left:29px;top:106px;width:14px;height:18px;background:#eeece9;border-radius:3px"></div>
<svg class="a" style="left:29px;top:107px;" width="14" height="16" viewBox="0 0 14 16"><path d="M4 7 V5 A3 3 0 0 1 10 5 V7" fill="none" stroke="#333" stroke-width="1.4"/><rect x="2.5" y="7" width="9" height="7" rx="1" fill="#e6b422" stroke="#444" stroke-width="1"/><circle cx="7" cy="10" r="1" fill="#333"/></svg>
<div class="a" style="left:0px;top:105px;width:27px;height:28px;background:#d3d0cc"></div>
<div class="a" style="left:0px;top:105px;width:27px;height:27.5px;border:3px solid #e81010"></div>
<svg class="a" style="left:6px;top:111px;" width="14" height="16" viewBox="0 0 14 16"><path d="M4 2.5 L4 13 L6.6 10.5 L8.6 14.5 L10.2 13.7 L8.3 9.9 L11.8 9.9Z" fill="#111"/></svg>
<svg class="a" style="left:5px;top:135.5px;" width="16" height="16" viewBox="0 0 16 16"><path d="M3 12 L4 4 L13 3" fill="none" stroke="#7a7aff" stroke-width="1"/><rect x="2" y="3" width="3.5" height="3.5" fill="#5050ff"/><circle cx="3" cy="13" r="1.5" fill="#8a8aff"/><circle cx="13" cy="3" r="1.3" fill="#8a8aff"/></svg>
<div class="a" style="left:0px;top:156px;width:27px;height:1px;background:#e6e3df"></div>
<svg class="a" style="left:5px;top:162.4px;" width="16" height="16" viewBox="0 0 16 16"><rect x="2.5" y="3" width="11" height="10" fill="#c8d8ec" stroke="#5f6770" stroke-width="1.2"/><rect x="3.5" y="4" width="5" height="4" fill="#e6eef8"/></svg>
<svg class="a" style="left:5px;top:188.3px;" width="16" height="16" viewBox="0 0 16 16"><circle cx="8" cy="8" r="5.5" fill="#f5b8c2" stroke="#666" stroke-width="1"/><circle cx="6.5" cy="6.5" r="2" fill="#fbe0e4"/></svg>
<svg class="a" style="left:5px;top:214px;" width="16" height="16" viewBox="0 0 16 16"><path d="M8 2.5 L9.6 6.3 L13.7 6.6 L10.6 9.2 L11.6 13.2 L8 11 L4.4 13.2 L5.4 9.2 L2.3 6.6 L6.4 6.3Z" fill="#f2e36b" stroke="#777" stroke-width="1"/></svg>
<svg class="a" style="left:5px;top:238.5px;" width="16" height="16" viewBox="0 0 16 16"><path d="M8 2 L13.5 5 V11 L8 14 L2.5 11 V5Z" fill="#7c86d6" stroke="#5a5f9a" stroke-width="0.8"/><path d="M2.5 11 L8 14 L13.5 11 L8 9Z" fill="#4a52a8"/></svg>
<svg class="a" style="left:5px;top:264.3px;" width="16" height="16" viewBox="0 0 16 16"><path d="M8 8.5 Q9.5 8.5 9.5 7 Q9.5 5 7.5 5 Q5 5 5 8 Q5 11.3 8.3 11.3 Q12 11.3 12 7.5 Q12 3 7.5 3 Q2.5 3 2.5 8.2 Q2.5 13.6 8.3 13.6" fill="none" stroke="#666" stroke-width="1.3"/></svg>
<svg class="a" style="left:5px;top:290px;" width="16" height="16" viewBox="0 0 16 16"><path d="M2.5 3 H8.5 L4 12.5 H8" fill="none" stroke="#3a3a3a" stroke-width="1.6" stroke-linejoin="round"/><path d="M1.5 14 H9" stroke="#888" stroke-width="1"/><path d="M7.5 11.5 L12 3.5 L14.5 5 L10 13Z" fill="#4aa0e0" stroke="#2a2a2a" stroke-width="0.9" stroke-linejoin="round"/><path d="M12 3.5 L13 2 L15.3 3.3 L14.5 5Z" fill="#1a3a6a"/></svg>
<svg class="a" style="left:5px;top:315.5px;" width="16" height="16" viewBox="0 0 16 16"><path d="M4 3 Q1.5 5 3.5 7 Q5.5 9 3 11 Q2 13 4.5 14" fill="none" stroke="#666" stroke-width="1.1"/><path d="M6 12.5 L11 3.5 L14 5.3 L9 14Z" fill="#f2c21a" stroke="#3a3a3a" stroke-width="0.9" stroke-linejoin="round"/><path d="M11 3.5 L12 2 L14.8 3.6 L14 5.3Z" fill="#e8503a"/><path d="M6 12.5 L6.2 15 L9 14Z" fill="#f3e0c0" stroke="#333" stroke-width="0.6"/></svg>
<svg class="a" style="left:5px;top:341.7px;" width="16" height="16" viewBox="0 0 16 16"><path d="M4.5 2.5 Q1 7 2.5 11.5 Q4 15 8 13.5 Q5.5 12 5.5 9 Q5.5 5.5 7.5 3.5Z" fill="#111"/><path d="M7.5 12 L11.2 4.2 L14 5.7 L10.3 13.5Z" fill="#f0c020" stroke="#3a3a3a" stroke-width="0.9" stroke-linejoin="round"/><path d="M11.2 4.2 L12.3 2.3 L15 3.8 L14 5.7Z" fill="#4a5aa8"/></svg>
<svg class="a" style="left:5px;top:367px;" width="16" height="16" viewBox="0 0 16 16"><path d="M2 14 L6.8 2.5 H9 L13.5 14 H10.8 L9.8 11 H6 L5 14Z M6.8 9 H9.1 L8 5.7Z" fill="#111"/><path d="M14 3 V14" stroke="#999" stroke-width="0.8"/></svg>
<div class="a" style="left:0px;top:389.4px;width:27px;height:1px;background:#e6e3df"></div>
<svg class="a" style="left:5px;top:393.4px;" width="16" height="16" viewBox="0 0 16 16"><rect x="2" y="2" width="12" height="12" fill="#8fd3a0"/><path d="M3.5 3.5 L12.5 12.5" stroke="#3a6b48" stroke-width="1"/><rect x="2.5" y="2.5" width="3" height="3" fill="none" stroke="#333" stroke-width="0.8"/><rect x="10.5" y="10.5" width="3" height="3" fill="none" stroke="#333" stroke-width="0.8"/></svg>
<svg class="a" style="left:5px;top:418.8px;" width="16" height="16" viewBox="0 0 16 16"><rect x="3" y="3" width="10" height="10" fill="#5aa898" stroke="#333" stroke-width="1"/><circle cx="3" cy="3" r="1.6" fill="#fff" stroke="#333" stroke-width="0.8"/><circle cx="13" cy="3" r="1.6" fill="#fff" stroke="#333" stroke-width="0.8"/><circle cx="3" cy="13" r="1.6" fill="#fff" stroke="#333" stroke-width="0.8"/><circle cx="13" cy="13" r="1.6" fill="#fff" stroke="#333" stroke-width="0.8"/></svg>
<svg class="a" style="left:5px;top:445px;" width="16" height="16" viewBox="0 0 16 16"><path d="M3 13 L9 7" stroke="#6a9fd8" stroke-width="2.2"/><path d="M8 5 L11 2 Q13 1.5 14 3 Q14.5 5 13 6 L10 9Z" fill="#222"/></svg>
<svg class="a" style="left:5px;top:469.5px;" width="16" height="16" viewBox="0 0 16 16"><path d="M3 9 Q3 3 8.5 3 Q13 3 13 8 L10 12 Q6 13 3 11Z" fill="#4a90c8" stroke="#333" stroke-width="0.8"/><path d="M3 13 Q8 15 13 13" stroke="#4caf50" stroke-width="1.6" fill="none"/></svg>
<div class="a" style="left:0px;top:492px;width:27px;height:1px;background:#e6e3df"></div>
<svg class="a" style="left:5px;top:497.4px;" width="16" height="16" viewBox="0 0 16 16"><path d="M2 14 V9 Q5 8 6 5 Q7 2 10 3 Q12 5 11 8 Q13 10 14 14Z" fill="#aaa"/></svg>
<svg class="a" style="left:5px;top:522.6px;" width="16" height="16" viewBox="0 0 16 16"><path d="M7 8 L11 4 Q14 6 14 10 Q13 14 10 13Z" fill="#5ab040" stroke="#333" stroke-width="0.7"/><circle cx="3" cy="4" r="0.8" fill="#555"/><circle cx="5" cy="2.5" r="0.8" fill="#555"/><circle cx="4.5" cy="6" r="0.8" fill="#555"/></svg>
<svg class="a" style="left:5px;top:547.9px;" width="16" height="16" viewBox="0 0 16 16"><path d="M3 11 L8.5 2.5 L13 5.5 L7.5 14Z" fill="#e8545a"/><path d="M3 11 L6 6.5 L10.5 9.5 L7.5 14Z" fill="#3a6fd8"/><path d="M1 14.5 H4 M10 14.5 H15" stroke="#555" stroke-width="0.8"/></svg>
<svg class="a" style="left:5px;top:574.4px;" width="16" height="16" viewBox="0 0 16 16"><rect x="5.5" y="2" width="5" height="4" fill="#8fb4dc" stroke="#444" stroke-width="0.8"/><rect x="1.5" y="10" width="5" height="4" fill="#8fb4dc" stroke="#444" stroke-width="0.8"/><rect x="9.5" y="10" width="5" height="4" fill="#8fb4dc" stroke="#444" stroke-width="0.8"/><path d="M8 6 V8 H4 V10 M8 8 H12 V10" fill="none" stroke="#444" stroke-width="0.9"/></svg>
<div class="a" style="left:0px;top:595px;width:27px;height:1px;background:#e6e3df"></div>
<svg class="a" style="left:5px;top:600.4px;" width="16" height="16" viewBox="0 0 16 16"><path d="M2.5 11 L9.5 3 L14 7 L7 15Z" fill="#e8b4a4" stroke="#555" stroke-width="0.9"/></svg>
<svg class="a" style="left:5px;top:626px;" width="16" height="16" viewBox="0 0 16 16"><circle cx="6.5" cy="6.5" r="4.5" fill="#dbe8f4" stroke="#555" stroke-width="1.3"/><path d="M10 10 L14 14" stroke="#e8a800" stroke-width="2.5" stroke-linecap="round"/></svg>
<svg class="a" style="left:5px;top:651.4px;" width="16" height="16" viewBox="0 0 16 16"><path d="M5 4 H10 L13 7 V14 H5Z" fill="#fff" stroke="#444" stroke-width="1"/><path d="M3 2 H8 L10 4 V12 H3Z" fill="#eee" stroke="#444" stroke-width="1"/></svg>
<div class="a" style="left:1216px;top:126px;width:10px;height:654px;background:#f6f5f4"></div>
<div class="a" style="left:1226px;top:126px;width:1px;height:654px;background:#ebe8e4"></div>
<div class="a" style="left:1219.2px;top:437.9px;width:3px;height:3px;border-radius:50%;background:#555"></div>
<div class="a" style="left:1219.2px;top:441.8px;width:3px;height:3px;border-radius:50%;background:#555"></div>
<div class="a" style="left:1219.2px;top:445.7px;width:3px;height:3px;border-radius:50%;background:#555"></div>
<div class="a" style="left:1225.5px;top:109.4px;width:306.5px;height:666.5px;background:#f3f2f0;border:1px solid #e3e0dc;border-radius:3px"></div>
<div class="a" style="left:1226.5px;top:110.4px;width:304.5px;height:29px;background:#e4e1de"></div>
<div class="a" style="left:1232.7px;top:110.4px;width:117.7px;height:28.5px;background:#ebe9e6"></div>
<div class="a" style="left:1232.7px;top:135.8px;width:117.7px;height:3.2px;background:#3584e4"></div>
<div class="a" style="left:1226.5px;top:139.6px;width:304.5px;height:1.5px;background:#f6f5f4"></div>
<svg class="a" style="left:1241px;top:115px;" width="15" height="15" viewBox="0 0 15 15"><path d="M1 1.5 H12 L3.5 13 H1Z" fill="#fff" stroke="#111" stroke-width="1.3"/><path d="M1.5 13.5 Q4.5 8.5 11 2.5 L13 4 Q7.5 10.5 3 14.5Z" fill="#111"/><path d="M11.5 1.2 L14 2.8 L12.5 4.8Z" fill="#f0b400"/></svg>
<div class="t" style="left:1255.6px;top:118.80px;height:10px;line-height:10px;font-size:10px;color:#3a3a3a;font-weight:normal;transform:scaleX(0.7410);transform-origin:0 50%;">フィル/ストローク(F)</div>
<svg class="a" style="left:1329px;top:119px;" width="10" height="10" viewBox="0 0 10 10"><path d="M2 2 L8 8 M8 2 L2 8" stroke="#555" stroke-width="1.3"/></svg>
<div class="a" style="left:1507.7px;top:111.5px;width:23.3px;height:23.5px;background:#e9e7e4;border-radius:3px"></div>
<svg class="a" style="left:1512px;top:117px;" width="14" height="10" viewBox="0 0 14 10"><path d="M2 2.5 L7 7.5 L12 2.5" fill="none" stroke="#555" stroke-width="1.3"/></svg>
<div class="a" style="left:1226.5px;top:141.2px;width:304.5px;height:21.5px;background:#dfdcd8"></div>
<div class="a" style="left:1232.7px;top:160.8px;width:58.3px;height:2.8px;background:#3584e4"></div>
<svg class="a" style="left:1239px;top:146px;" width="13" height="13" viewBox="0 0 13 13"><defs><linearGradient id="gf" x1="0" y1="0" x2="1" y2="1"><stop offset="0" stop-color="#9db8d8"/><stop offset="1" stop-color="#eef3f8"/></linearGradient></defs><rect x="0.5" y="0.5" width="12" height="12" fill="url(#gf)"/></svg>
<div class="t" style="left:1254.5px;top:147.60px;height:10px;line-height:10px;font-size:10px;color:#3e3e3e;font-weight:normal;transform:scaleX(0.7316);transform-origin:0 50%;">フィル(F)</div>
<svg class="a" style="left:1303.5px;top:146px;" width="13" height="13" viewBox="0 0 13 13"><rect x="1" y="1" width="10.5" height="10.5" fill="none" stroke="#777" stroke-width="1"/></svg>
<div class="t" style="left:1319px;top:147.60px;height:10px;line-height:10px;font-size:10px;color:#3e3e3e;font-weight:normal;transform:scaleX(0.7499);transform-origin:0 50%;">ストロークの塗り(P)</div>
<svg class="a" style="left:1406px;top:146px;" width="14" height="13" viewBox="0 0 14 13"><path d="M1 3.5 H10 M1 6.5 H13 M1 9.5 H10" stroke="#555" stroke-width="1.3"/><path d="M10 1.5 L13 3.5 L10 5.5Z M10 7.5 L13 9.5 L10 11.5Z" fill="#555"/></svg>
<div class="t" style="left:1423.3px;top:147.60px;height:10px;line-height:10px;font-size:10px;color:#3e3e3e;font-weight:normal;transform:scaleX(0.7349);transform-origin:0 50%;">ストロークのスタイル(Y)</div>
<div class="a" style="left:1226.4px;top:162.6px;width:304.2px;height:523px;background:#fff;border-left:1px solid #e3e0dc;border-right:1px solid #e3e0dc;border-bottom:1px solid #dcd9d5"></div>
<svg class="a" style="left:1236px;top:173px;" width="11" height="11" viewBox="0 0 11 11"><path d="M2 2 L9 9 M9 2 L2 9" stroke="#cfcfcf" stroke-width="1.4"/></svg>
<svg class="a" style="left:1257px;top:171px;" width="14" height="14" viewBox="0 0 14 14"><rect x="0.5" y="0.5" width="13" height="13" fill="#e9eef5" stroke="#dde2e8" stroke-width="1"/></svg>
<svg class="a" style="left:1278.8px;top:171px;" width="14" height="14" viewBox="0 0 14 14"><rect x="0.5" y="0.5" width="13" height="13" fill="#e9eef5" stroke="#dde2e8" stroke-width="1"/></svg>
<svg class="a" style="left:1301.7px;top:171px;" width="14" height="14" viewBox="0 0 14 14"><rect x="0.5" y="0.5" width="13" height="13" fill="#e9eef5" stroke="#dde2e8" stroke-width="1"/></svg>
<svg class="a" style="left:1324.2px;top:171px;" width="14" height="14" viewBox="0 0 14 14"><rect x="0.5" y="0.5" width="13" height="13" fill="#e9eef5" stroke="#dde2e8" stroke-width="1"/></svg>
<svg class="a" style="left:1346.5px;top:171px;" width="14" height="14" viewBox="0 0 14 14"><rect x="0.5" y="0.5" width="13" height="13" fill="#e9eef5" stroke="#dde2e8" stroke-width="1"/></svg>
<svg class="a" style="left:1369px;top:171px;" width="14" height="14" viewBox="0 0 14 14"><rect x="0.5" y="0.5" width="13" height="13" fill="#e9eef5" stroke="#dde2e8" stroke-width="1"/></svg>
<svg class="a" style="left:1326px;top:173px;" width="11" height="11" viewBox="0 0 11 11"><rect x="0" y="0" width="5.5" height="5.5" fill="#cdd9e6"/><rect x="5.5" y="5.5" width="5.5" height="5.5" fill="#cdd9e6"/></svg>
<svg class="a" style="left:1348px;top:173px;" width="11" height="11" viewBox="0 0 11 11"><path d="M5.5 0 V11 M0 5.5 H11" stroke="#d4dde8" stroke-width="1"/></svg>
<svg class="a" style="left:1371px;top:173px;" width="11" height="11" viewBox="0 0 11 11"><rect x="1" y="1" width="9" height="9" fill="#fff" stroke="#e6e9ee" stroke-width="1"/></svg>
<div class="t" style="left:1393.8px;top:168.80px;height:15px;line-height:15px;font-size:15px;color:#c9c9c9;font-weight:bold;">?</div>
<svg class="a" style="left:1414.2px;top:171.2px;" width="13" height="14" viewBox="0 0 13 14"><path d="M6.5 3.6 Q4.8 0.8 2.6 1.4 Q0 2.4 0.6 6.5 Q1.6 12.8 6.5 13 Q11.4 12.8 12.4 6.5 Q13 2.4 10.4 1.4 Q8.2 0.8 6.5 3.6Z" fill="#cdcdcd"/><path d="M6.5 5.8 Q4.4 8.2 4.6 9.8 Q5 11.2 6.5 11.2 Q8 11.2 8.4 9.8 Q8.6 8.2 6.5 5.8Z" fill="#fff"/></svg>
<div class="a" style="left:1432.7px;top:167px;width:21.8px;height:21.5px;background:#e6e4e1;border:1px solid #dcd9d5;border-radius:3px"></div>
<svg class="a" style="left:1436.5px;top:171.2px;" width="13" height="14" viewBox="0 0 13 14"><path d="M6.5 3.6 Q4.8 0.8 2.6 1.4 Q0 2.4 0.6 6.5 Q1.6 12.8 6.5 13 Q11.4 12.8 12.4 6.5 Q13 2.4 10.4 1.4 Q8.2 0.8 6.5 3.6Z" fill="#b0b0ae"/></svg>
<div class="t" style="left:1233.7px;top:194.20px;height:10px;line-height:10px;font-size:10px;color:#2a2a2a;font-weight:bold;transform:scaleX(0.7250);transform-origin:0 50%;">オブジェクトなし</div>
<div class="a" style="left:1226.5px;top:686px;width:304.5px;height:89px;background:#fff"></div>
<div class="t" style="left:1393px;top:697.50px;height:10px;line-height:10px;font-size:10px;color:#b5b3b0;font-weight:normal;transform:scaleX(0.6733);transform-origin:0 50%;">ブレンドモード:</div>
<div class="a" style="left:1443.5px;top:689px;width:85.5px;height:27px;background:#f7f6f5;border:1px solid #e2dfdb;border-radius:5px"></div>
<div class="t" style="left:1453.5px;top:697.50px;height:10px;line-height:10px;font-size:10px;color:#b5b3b0;font-weight:normal;transform:scaleX(0.9000);transform-origin:0 50%;">標準</div>
<svg class="a" style="left:1509px;top:698px;" width="12" height="8" viewBox="0 0 12 8"><path d="M1.5 1.5 H10 L5.75 6.5Z" fill="#9a9a9a"/></svg>
<div class="a" style="left:1229.5px;top:719.4px;width:298px;height:23.899999999999977px;background:#f8f7f6;border:1px solid #e6e3df;border-radius:4px"></div>
<div class="a" style="left:1470.6px;top:720.4px;width:1px;height:21.899999999999977px;background:#e8e6e3"></div>
<div class="a" style="left:1499px;top:720.4px;width:1px;height:21.899999999999977px;background:#ecebe8"></div>
<div class="a" style="left:1513px;top:720.4px;width:1px;height:21.899999999999977px;background:#ecebe8"></div>
<div class="t" style="left:1476.4px;top:726.60px;height:9.5px;line-height:9.5px;font-size:9.5px;color:#c3c1be;font-weight:normal;">0.0</div>
<div class="a" style="left:1502px;top:730.7499999999999px;width:9px;height:1.2px;background:#dedcd9"></div>
<div class="a" style="left:1515.5px;top:730.7499999999999px;width:10px;height:1.2px;background:#dedcd9"></div>
<div class="a" style="left:1519.9px;top:726.3499999999999px;width:1.2px;height:10px;background:#dedcd9"></div>
<div class="a" style="left:1229.5px;top:747.5px;width:298px;height:25.0px;background:#f8f7f6;border:1px solid #e6e3df;border-radius:4px"></div>
<div class="a" style="left:1470.6px;top:748.5px;width:1px;height:23.0px;background:#e8e6e3"></div>
<div class="a" style="left:1499px;top:748.5px;width:1px;height:23.0px;background:#ecebe8"></div>
<div class="a" style="left:1513px;top:748.5px;width:1px;height:23.0px;background:#ecebe8"></div>
<div class="t" style="left:1476.4px;top:755.25px;height:9.5px;line-height:9.5px;font-size:9.5px;color:#c3c1be;font-weight:normal;">100.0</div>
<div class="a" style="left:1502px;top:759.4px;width:9px;height:1.2px;background:#dedcd9"></div>
<div class="a" style="left:1515.5px;top:759.4px;width:10px;height:1.2px;background:#dedcd9"></div>
<div class="a" style="left:1519.9px;top:755.0px;width:1.2px;height:10px;background:#dedcd9"></div>
<div class="a" style="left:0px;top:780px;width:1536px;height:52px;background:#f6f5f4"></div>
<svg class="a" style="left:0px;top:790px;" width="14" height="13.5" viewBox="0 0 14 13.5"><path d="M1.2 1 L12.8 12.5 M12.8 1 L1.2 12.5" stroke="#a33a3a" stroke-width="1.7"/></svg>
<svg class="a" style="left:0px;top:790.2px;" width="1536" height="13" viewBox="0 0 1536 13"><rect x="14.40" y="0" width="12.6" height="12.9" fill="#000000"/><rect x="28.00" y="0" width="12.6" height="12.9" fill="#1a1a1a"/><rect x="41.60" y="0" width="12.6" height="12.9" fill="#333333"/><rect x="55.20" y="0" width="12.6" height="12.9" fill="#4d4d4d"/><rect x="68.80" y="0" width="12.6" height="12.9" fill="#666666"/><rect x="82.40" y="0" width="12.6" height="12.9" fill="#808080"/><rect x="96.00" y="0" width="12.6" height="12.9" fill="#999999"/><rect x="109.60" y="0" width="12.6" height="12.9" fill="#b3b3b3"/><rect x="123.20" y="0" width="12.6" height="12.9" fill="#cccccc"/><rect x="136.80" y="0" width="12.6" height="12.9" fill="#e6e6e6"/><rect x="150.40" y="0" width="12.6" height="12.9" fill="#ececec"/><rect x="164.00" y="0" width="12.6" height="12.9" fill="#f2f2f2"/><rect x="177.60" y="0" width="12.6" height="12.9" fill="#f9f9f9"/><rect x="191.20" y="0" width="12.6" height="12.9" fill="#ffffff"/><rect x="204.80" y="0" width="12.6" height="12.9" fill="#800000"/><rect x="218.40" y="0" width="12.6" height="12.9" fill="#ff0000"/><rect x="232.00" y="0" width="12.6" height="12.9" fill="#808000"/><rect x="245.60" y="0" width="12.6" height="12.9" fill="#ffff00"/><rect x="259.20" y="0" width="12.6" height="12.9" fill="#008000"/><rect x="272.80" y="0" width="12.6" height="12.9" fill="#00ff00"/><rect x="286.40" y="0" width="12.6" height="12.9" fill="#008080"/><rect x="300.00" y="0" width="12.6" height="12.9" fill="#00ffff"/><rect x="313.60" y="0" width="12.6" height="12.9" fill="#000080"/><rect x="327.20" y="0" width="12.6" height="12.9" fill="#0000ff"/><rect x="340.80" y="0" width="12.6" height="12.9" fill="#800080"/><rect x="354.40" y="0" width="12.6" height="12.9" fill="#ff00ff"/><rect x="368.00" y="0" width="12.6" height="12.9" fill="#2b0000"/><rect x="381.60" y="0" width="12.6" height="12.9" fill="#550000"/><rect x="395.20" y="0" width="12.6" height="12.9" fill="#800000"/><rect x="408.80" y="0" width="12.6" height="12.9" fill="#aa0000"/><rect x="422.40" y="0" width="12.6" height="12.9" fill="#d40000"/><rect x="436.00" y="0" width="12.6" height="12.9" fill="#ff0000"/><rect x="449.60" y="0" width="12.6" height="12.9" fill="#ff2a2a"/><rect x="463.20" y="0" width="12.6" height="12.9" fill="#ff5555"/><rect x="476.80" y="0" width="12.6" height="12.9" fill="#ff8080"/><rect x="490.40" y="0" width="12.6" height="12.9" fill="#ffaaaa"/><rect x="504.00" y="0" width="12.6" height="12.9" fill="#ffd5d5"/><rect x="517.60" y="0" width="12.6" height="12.9" fill="#280b0b"/><rect x="531.20" y="0" width="12.6" height="12.9" fill="#501616"/><rect x="544.80" y="0" width="12.6" height="12.9" fill="#782121"/><rect x="558.40" y="0" width="12.6" height="12.9" fill="#a02c2c"/><rect x="572.00" y="0" width="12.6" height="12.9" fill="#c83737"/><rect x="585.60" y="0" width="12.6" height="12.9" fill="#d35f5f"/><rect x="599.20" y="0" width="12.6" height="12.9" fill="#de8787"/><rect x="612.80" y="0" width="12.6" height="12.9" fill="#e9afaf"/><rect x="626.40" y="0" width="12.6" height="12.9" fill="#f4d7d7"/><rect x="640.00" y="0" width="12.6" height="12.9" fill="#241c1c"/><rect x="653.60" y="0" width="12.6" height="12.9" fill="#483737"/><rect x="667.20" y="0" width="12.6" height="12.9" fill="#6c5353"/><rect x="680.80" y="0" width="12.6" height="12.9" fill="#916f6f"/><rect x="694.40" y="0" width="12.6" height="12.9" fill="#ac9393"/><rect x="708.00" y="0" width="12.6" height="12.9" fill="#c8b7b7"/><rect x="721.60" y="0" width="12.6" height="12.9" fill="#e3dbdb"/><rect x="735.20" y="0" width="12.6" height="12.9" fill="#2b1100"/><rect x="748.80" y="0" width="12.6" height="12.9" fill="#552200"/><rect x="762.40" y="0" width="12.6" height="12.9" fill="#803300"/><rect x="776.00" y="0" width="12.6" height="12.9" fill="#aa4400"/><rect x="789.60" y="0" width="12.6" height="12.9" fill="#d45500"/><rect x="803.20" y="0" width="12.6" height="12.9" fill="#ff6600"/><rect x="816.80" y="0" width="12.6" height="12.9" fill="#ff7f2a"/><rect x="830.40" y="0" width="12.6" height="12.9" fill="#ff9955"/><rect x="844.00" y="0" width="12.6" height="12.9" fill="#ffb380"/><rect x="857.60" y="0" width="12.6" height="12.9" fill="#ffccaa"/><rect x="871.20" y="0" width="12.6" height="12.9" fill="#ffe6d5"/><rect x="884.80" y="0" width="12.6" height="12.9" fill="#28170b"/><rect x="898.40" y="0" width="12.6" height="12.9" fill="#502d16"/><rect x="912.00" y="0" width="12.6" height="12.9" fill="#784421"/><rect x="925.60" y="0" width="12.6" height="12.9" fill="#a05a2c"/><rect x="939.20" y="0" width="12.6" height="12.9" fill="#c87137"/><rect x="952.80" y="0" width="12.6" height="12.9" fill="#d38d5f"/><rect x="966.40" y="0" width="12.6" height="12.9" fill="#deaa87"/><rect x="980.00" y="0" width="12.6" height="12.9" fill="#e9c6af"/><rect x="993.60" y="0" width="12.6" height="12.9" fill="#f4e3d7"/><rect x="1007.20" y="0" width="12.6" height="12.9" fill="#241f1c"/><rect x="1020.80" y="0" width="12.6" height="12.9" fill="#483e37"/><rect x="1034.40" y="0" width="12.6" height="12.9" fill="#6c5d53"/><rect x="1048.00" y="0" width="12.6" height="12.9" fill="#917c6f"/><rect x="1061.60" y="0" width="12.6" height="12.9" fill="#ac9d93"/><rect x="1075.20" y="0" width="12.6" height="12.9" fill="#c8beb7"/><rect x="1088.80" y="0" width="12.6" height="12.9" fill="#e3dedb"/><rect x="1102.40" y="0" width="12.6" height="12.9" fill="#2b2200"/><rect x="1116.00" y="0" width="12.6" height="12.9" fill="#554400"/><rect x="1129.60" y="0" width="12.6" height="12.9" fill="#806600"/><rect x="1143.20" y="0" width="12.6" height="12.9" fill="#aa8800"/><rect x="1156.80" y="0" width="12.6" height="12.9" fill="#d4aa00"/><rect x="1170.40" y="0" width="12.6" height="12.9" fill="#ffcc00"/><rect x="1184.00" y="0" width="12.6" height="12.9" fill="#ffd42a"/><rect x="1197.60" y="0" width="12.6" height="12.9" fill="#ffdd55"/><rect x="1211.20" y="0" width="12.6" height="12.9" fill="#ffe680"/><rect x="1224.80" y="0" width="12.6" height="12.9" fill="#ffeeaa"/><rect x="1238.40" y="0" width="12.6" height="12.9" fill="#fff6d5"/><rect x="1252.00" y="0" width="12.6" height="12.9" fill="#28220b"/><rect x="1265.60" y="0" width="12.6" height="12.9" fill="#504416"/><rect x="1279.20" y="0" width="12.6" height="12.9" fill="#786621"/><rect x="1292.80" y="0" width="12.6" height="12.9" fill="#a0892c"/><rect x="1306.40" y="0" width="12.6" height="12.9" fill="#c8ab37"/><rect x="1320.00" y="0" width="12.6" height="12.9" fill="#d3bc5f"/><rect x="1333.60" y="0" width="12.6" height="12.9" fill="#decd87"/><rect x="1347.20" y="0" width="12.6" height="12.9" fill="#e9ddaf"/><rect x="1360.80" y="0" width="12.6" height="12.9" fill="#f4eed7"/><rect x="1374.40" y="0" width="12.6" height="12.9" fill="#24221c"/><rect x="1388.00" y="0" width="12.6" height="12.9" fill="#484537"/><rect x="1401.60" y="0" width="12.6" height="12.9" fill="#6c6753"/><rect x="1415.20" y="0" width="12.6" height="12.9" fill="#918a6f"/><rect x="1428.80" y="0" width="12.6" height="12.9" fill="#aca793"/><rect x="1442.40" y="0" width="12.6" height="12.9" fill="#c8c4b7"/><rect x="1456.00" y="0" width="12.6" height="12.9" fill="#e3e2db"/></svg>
<svg class="a" style="left:1474px;top:789px;" width="16" height="12" viewBox="0 0 16 12"><path d="M2.5 9 L8 3.5 L13.5 9" fill="none" stroke="#2e3436" stroke-width="1.8"/></svg>
<svg class="a" style="left:1499px;top:789px;" width="16" height="12" viewBox="0 0 16 12"><path d="M2.5 3 L8 8.5 L13.5 3" fill="none" stroke="#2e3436" stroke-width="1.8"/></svg>
<div class="a" style="left:1520.7px;top:784px;width:16px;height:17px;background:#f0eeec;border:1px solid #d8d5d1;border-radius:3px"></div>
<svg class="a" style="left:1521px;top:786px;" width="15" height="14" viewBox="0 0 15 14"><path d="M2.5 3 H12.5 M2.5 7 H12.5 M2.5 11 H12.5" stroke="#2e3436" stroke-width="1.6"/></svg>
<div class="t" style="left:16.4px;top:807.00px;height:10px;line-height:10px;font-size:10px;color:#555;font-weight:normal;transform:scaleX(0.6589);transform-origin:0 50%;">フィル:</div>
<div class="t" style="left:1.5px;top:820.20px;height:10px;line-height:10px;font-size:10px;color:#555;font-weight:normal;transform:scaleX(0.6915);transform-origin:0 50%;">ストローク:</div>
<div class="t" style="left:54.7px;top:807.00px;height:10px;line-height:10px;font-size:10px;color:#555;font-weight:normal;transform:scaleX(0.8325);transform-origin:0 50%;">該当なし</div>
<div class="t" style="left:54.7px;top:820.20px;height:10px;line-height:10px;font-size:10px;color:#555;font-weight:normal;transform:scaleX(0.8325);transform-origin:0 50%;">該当なし</div>
<div class="t" style="left:126.5px;top:813.50px;height:10px;line-height:10px;font-size:10px;color:#555;font-weight:normal;transform:scaleX(0.8521);transform-origin:0 50%;">O:</div>
<div class="a" style="left:138.2px;top:806px;width:56.3px;height:30px;background:#f8f7f6;border:1px solid #e0ddd9;border-radius:5px"></div>
<div class="a" style="left:166.5px;top:807px;width:1px;height:25px;background:#ebe9e6"></div>
<div class="a" style="left:181px;top:807px;width:1px;height:25px;background:#ebe9e6"></div>
<div class="t" style="left:144.5px;top:813.50px;height:10px;line-height:10px;font-size:10px;color:#c0bebb;font-weight:normal;transform:scaleX(0.8989);transform-origin:0 50%;">100</div>
<div class="a" style="left:169px;top:818px;width:10px;height:1.2px;background:#dad8d5"></div>
<div class="a" style="left:183px;top:818px;width:10px;height:1.2px;background:#dad8d5"></div>
<div class="a" style="left:187.4px;top:813px;width:1.2px;height:11px;background:#dad8d5"></div>
<div class="a" style="left:209.4px;top:811px;width:2.2px;height:13.5px;background:#6d9ad6"></div>
<div class="t" style="left:216.5px;top:813.30px;height:10px;line-height:10px;font-size:10px;color:#555;font-weight:normal;transform:scaleX(0.8543);transform-origin:0 50%;">Layer 1</div>
<svg class="a" style="left:260px;top:811px;" width="16" height="13" viewBox="0 0 16 13"><path d="M1 6.5 Q8 -0.5 15 6.5 Q8 13.5 1 6.5Z" fill="#fff" stroke="#111" stroke-width="1.5"/><circle cx="8" cy="6.8" r="3" fill="#111"/><path d="M3 2.5 L2 1 M6 1.5 L5.5 0 M10 1.5 L10.5 0 M13 2.5 L14 1" stroke="#111" stroke-width="1"/></svg>
<svg class="a" style="left:290px;top:810px;" width="14" height="15" viewBox="0 0 14 15"><path d="M4 7 V4.5 A3 3 0 0 1 10 4.5" fill="none" stroke="#333" stroke-width="1.3"/><rect x="2.5" y="7" width="9" height="6.5" rx="1" fill="#f3e7a6" stroke="#333" stroke-width="1.1"/><rect x="6.5" y="9" width="1.2" height="2.5" fill="#333"/></svg>
<div class="a" style="left:311.5px;top:806px;width:1px;height:26px;background:#e0ddd9"></div>
<div class="t" style="left:318px;top:813.50px;height:10px;line-height:10px;font-size:10px;color:#444;font-weight:normal;transform:scaleX(0.7786);transform-origin:0 50%;">Alt: パスをタッチして選択, オブジェクトを順に選択, 強制ドラッグ</div>
<div class="a" style="left:1293.3px;top:806px;width:1px;height:26px;background:#e0ddd9"></div>
<div class="t" style="left:1301.7px;top:806.80px;height:10px;line-height:10px;font-size:10px;color:#555;font-weight:normal;transform:scaleX(0.8463);transform-origin:0 50%;">X:</div>
<div class="t" style="left:1317.5px;top:806.80px;height:10px;line-height:10px;font-size:10px;color:#555;font-weight:normal;transform:scaleX(0.8712);transform-origin:0 50%;">2220.38</div>
<div class="t" style="left:1301.7px;top:820.20px;height:10px;line-height:10px;font-size:10px;color:#555;font-weight:normal;transform:scaleX(0.8982);transform-origin:0 50%;">Y:</div>
<div class="t" style="left:1317.5px;top:820.20px;height:10px;line-height:10px;font-size:10px;color:#555;font-weight:normal;transform:scaleX(0.8712);transform-origin:0 50%;">1592.79</div>
<div class="t" style="left:1356.7px;top:813.50px;height:10px;line-height:10px;font-size:10px;color:#555;font-weight:normal;transform:scaleX(0.8998);transform-origin:0 50%;">Z:</div>
<div class="a" style="left:1365.8px;top:805.8px;width:68px;height:30px;background:#fff;border:1px solid #e0ddd9;border-radius:5px"></div>
<div class="a" style="left:1399px;top:807px;width:1px;height:25px;background:#eeece9"></div>
<div class="a" style="left:1417px;top:807px;width:1px;height:25px;background:#eeece9"></div>
<div class="t" style="left:1373.5px;top:813.50px;height:10px;line-height:10px;font-size:10px;color:#444;font-weight:normal;transform:scaleX(0.7744);transform-origin:0 50%;">50%</div>
<div class="a" style="left:1402px;top:818px;width:11px;height:1.6px;background:#2e3436"></div>
<div class="a" style="left:1419px;top:818px;width:12px;height:1.6px;background:#2e3436"></div>
<div class="a" style="left:1424.2px;top:812.5px;width:1.6px;height:12.5px;background:#2e3436"></div>
<div class="t" style="left:1443px;top:813.50px;height:10px;line-height:10px;font-size:10px;color:#777;font-weight:normal;transform:scaleX(0.8000);transform-origin:0 50%;">R:</div>
<div class="a" style="left:1451.7px;top:805.8px;width:73.3px;height:30px;background:#fff;border:1px solid #e0ddd9;border-radius:5px"></div>
<div class="a" style="left:1491.7px;top:807px;width:1px;height:25px;background:#eeece9"></div>
<div class="a" style="left:1508px;top:807px;width:1px;height:25px;background:#eeece9"></div>
<div class="t" style="left:1461.7px;top:813.50px;height:10px;line-height:10px;font-size:10px;color:#555;font-weight:normal;transform:scaleX(0.8948);transform-origin:0 50%;">0.00°</div>
<div class="a" style="left:1493.5px;top:818px;width:11px;height:1.6px;background:#2e3436"></div>
<div class="a" style="left:1510px;top:818px;width:12px;height:1.6px;background:#2e3436"></div>
<div class="a" style="left:1515.2px;top:812.5px;width:1.6px;height:12.5px;background:#2e3436"></div>
<div class="a" style="left:86.4px;top:68.4px;width:242px;height:222.5px;background:#fff5b8;border:1px solid #aea66c;box-shadow:1px 1px 2px rgba(30,30,0,0.25)"></div>
<div class="a" style="left:164px;top:87.5px;width:87.2px;height:87.5px;background:#e4e1dd"></div>
<div class="a" style="left:165.5px;top:89px;width:84.2px;height:84.5px;background:#d7d3cf;border-radius:9px"></div>
<svg class="a" style="left:190px;top:112px;" width="30" height="40" viewBox="0 0 30 40"><path d="M6.9 4.6 L6.9 31.6 L12.4 26.2 L15.9 35.6 Q17.3 37.6 19.4 35.9 L16.6 24.6 L23.4 23 Z" fill="#0a0a0a" stroke="#0a0a0a" stroke-width="0.6" stroke-linejoin="round"/></svg>
<svg class="a" style="left:0;top:0" width="1536" height="832"><text x="103.40" y="223.60" font-size="26.4" font-weight="bold" fill="#10104a" stroke="#10104a" stroke-width="0.6" stroke-linejoin="round" textLength="205.90" lengthAdjust="spacingAndGlyphs">「選択ツール」</text></svg>
<svg class="a" style="left:0;top:0" width="1536" height="832"><text x="163.60" y="261.30" font-size="26.4" font-weight="bold" fill="#10104a" stroke="#10104a" stroke-width="0.6" stroke-linejoin="round" textLength="86.80" lengthAdjust="spacingAndGlyphs">を選択</text></svg>
<svg class="a" style="left:825.7px;top:610.7px;" width="547.6" height="141" viewBox="0 0 547.6 141"><rect x="2.3" y="2.3" width="543" height="136.4" fill="#fff5b8"/><rect x="1.25" y="1.25" width="545.1" height="138.5" fill="none" stroke="#bcb26a" stroke-width="2.3" stroke-dasharray="7.5 3.8"/></svg>
<div class="a" style="left:878.2px;top:643px;width:6.5px;height:28.7px;border-radius:3px;background:#10104a"></div>
<div class="a" style="left:897.8px;top:664.3px;width:8.4px;height:8.4px;border-radius:50%;background:#10104a"></div>
<svg class="a" style="left:0;top:0" width="1536" height="832"><text x="924.60" y="668.80" font-size="32.3" font-weight="bold" fill="#10104a" stroke="#10104a" stroke-width="0.6" stroke-linejoin="round" textLength="403.30" lengthAdjust="spacingAndGlyphs">黒い円をクリックして選択</text></svg>
<svg class="a" style="left:0;top:0" width="1536" height="832"><text x="869.50" y="720.00" font-size="40" font-weight="normal" fill="#10104a" stroke="#10104a" stroke-width="1.4" stroke-linejoin="round" textLength="22.00" lengthAdjust="spacingAndGlyphs">2</text></svg>
<div class="a" style="left:897.5px;top:711px;width:8.4px;height:8.4px;border-radius:50%;background:#10104a"></div>
<svg class="a" style="left:0;top:0" width="1536" height="832"><text x="917.00" y="717.20" font-size="32.3" font-weight="bold" fill="#10104a" stroke="#10104a" stroke-width="0.6" stroke-linejoin="round" textLength="377.40" lengthAdjust="spacingAndGlyphs">ドラッグして移動させる</text></svg>
<svg class="a" style="left:0px;top:120px;" width="100" height="120" viewBox="0 0 100 120"><path d="M86 102.5 C64 93 44 80 35 64 C29 53 26 44 24 33" fill="none" stroke="#000" stroke-width="3.8"/><path d="M20.2 13.7 L13.7 34.6 L23.8 31 L33.2 33.2Z" fill="#000"/></svg>
</body></html>
